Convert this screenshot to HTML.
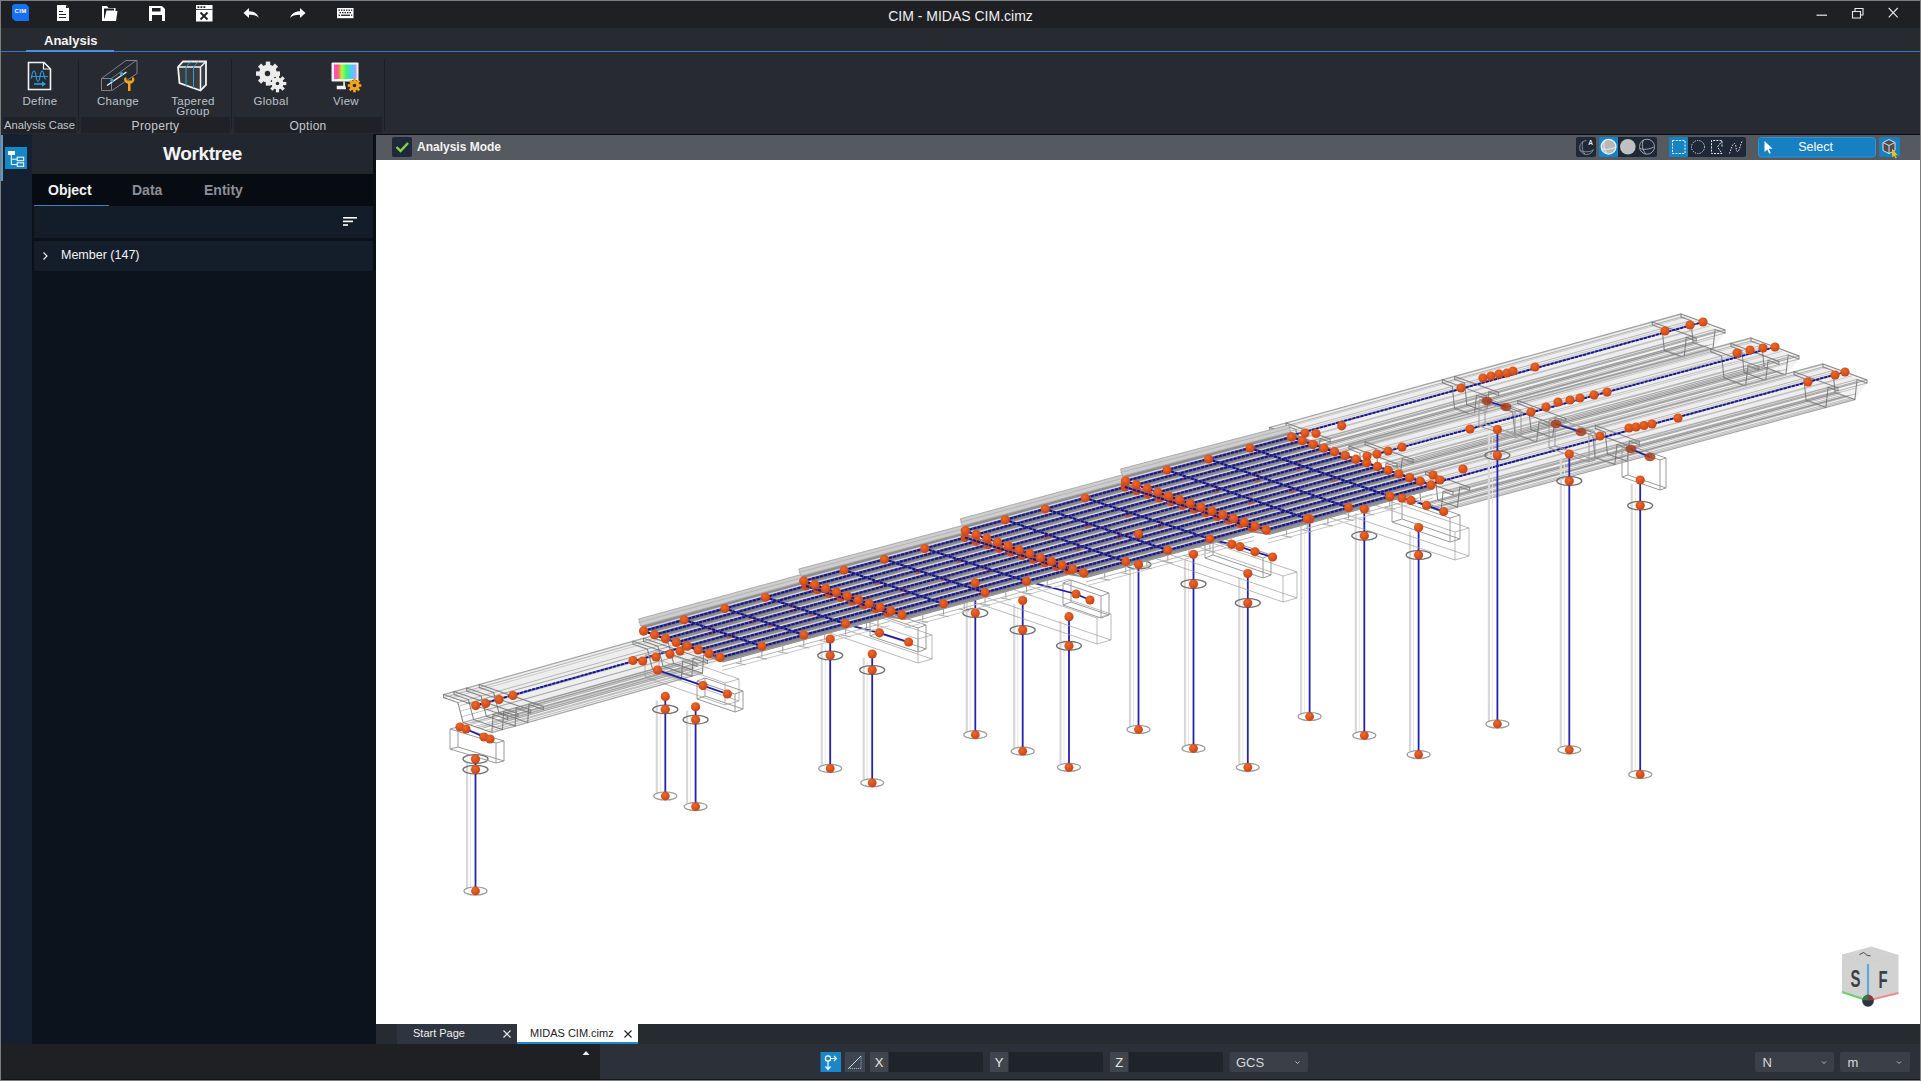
<!DOCTYPE html>
<html><head><meta charset="utf-8">
<style>
*{margin:0;padding:0;box-sizing:border-box}
html,body{width:1921px;height:1081px;overflow:hidden;background:#7d7d7d;font-family:"Liberation Sans",sans-serif}
.a{position:absolute}
.t{position:absolute;white-space:nowrap;line-height:1}
#title{left:1px;top:1px;width:1919px;height:27px;background:#1f2024}
#tabrow{left:1px;top:28px;width:1919px;height:24px;background:#272a31}
#ribbon{left:1px;top:52px;width:1919px;height:82px;background:#272a31}
#main{left:1px;top:134px;width:1919px;height:910px;background:#0a0e14}
#status{left:1px;top:1044px;width:1919px;height:36px;background:#2c3139}
.rl{color:#bcc2cb;font-size:11.5px;letter-spacing:0.3px;text-align:center}
.gl{background:#1f2126;height:16px;top:117px}
.glt{color:#c3c8cf;font-size:12px;letter-spacing:0.3px;text-align:center;width:100%;top:3px;left:0}
.sep{width:1px;background:#1c1e22;top:59px;height:71px}
</style></head><body>
<div class="a" id="title"></div>
<div class="a" id="tabrow"></div>
<div class="a" id="ribbon"></div>
<div class="a" id="main"></div>
<div class="a" id="status"></div>
<!-- title icons -->
<svg class="a" style="left:0;top:0" width="370" height="28" viewBox="0 0 370 28">
  <path d="M14 4h12l3 3v14H15l-3-3V6Z" fill="#1670f0"/>
  <text x="20.5" y="13" font-family="Liberation Sans" font-weight="bold" font-size="6" letter-spacing="0.3" fill="#fff" text-anchor="middle">CIM</text>
  <path d="M57 5h9l3 3v13H57Z" fill="#fff"/>
  <path d="M66 5v3h3Z" fill="#1f2024"/>
  <rect x="59" y="11" width="4" height="1" fill="#1f2024"/>
  <rect x="59" y="14" width="7" height="1" fill="#1f2024"/>
  <rect x="59" y="17" width="7" height="1" fill="#1f2024"/>
  <path d="M102 6h5l1.5 2h7v3h2L116 21h-14Z" fill="#fff"/>
  <path d="M104 8.5h10v2h-7.5L104.5 18.5h-0.5Z" fill="#1f2024"/>
  <path d="M149 6h13l3 3v12h-16Z" fill="#fff"/>
  <rect x="152" y="8" width="8.5" height="3.5" fill="#1f2024"/>
  <rect x="152" y="15" width="10" height="6" fill="#1f2024"/>
  <rect x="196" y="5" width="16.5" height="16.5" fill="#fff"/>
  <rect x="196" y="9" width="16.5" height="0.8" fill="#1f2024"/>
  <rect x="197.5" y="6.2" width="1.8" height="1.8" fill="#1f2024"/><rect x="200.5" y="6.2" width="1.8" height="1.8" fill="#1f2024"/><rect x="203.5" y="6.2" width="1.8" height="1.8" fill="#1f2024"/>
  <path d="M200.5 12.5l7 7M207.5 12.5l-7 7" stroke="#1f2024" stroke-width="1.8"/>
  <path d="M243.5 13l5.5-5v3.2c5 0 8.5 2.3 10 6.8c-2-2.2-5-3.2-10-3.2V18Z" fill="#fff"/>
  <path d="M305.5 13l-5.5-5v3.2c-5 0-8.5 2.3-10 6.8c2-2.2 5-3.2 10-3.2V18Z" fill="#fff"/>
  <rect x="337" y="8" width="16.5" height="10.2" fill="#fff"/>
  <g fill="#1f2024">
   <rect x="338.5" y="9.5" width="1.5" height="1.3"/><rect x="341" y="9.5" width="1.5" height="1.3"/><rect x="343.5" y="9.5" width="1.5" height="1.3"/><rect x="346" y="9.5" width="1.5" height="1.3"/><rect x="348.5" y="9.5" width="1.5" height="1.3"/><rect x="351" y="9.5" width="1.2" height="1.3"/>
   <rect x="339.5" y="12" width="1.5" height="1.3"/><rect x="342" y="12" width="1.5" height="1.3"/><rect x="344.5" y="12" width="1.5" height="1.3"/><rect x="347" y="12" width="1.5" height="1.3"/><rect x="349.5" y="12" width="1.5" height="1.3"/>
   <rect x="338.5" y="14.6" width="1.5" height="1.3"/><rect x="341" y="14.6" width="9" height="1.3"/><rect x="351" y="14.6" width="1.2" height="1.3"/>
  </g>
</svg>
<div class="t" style="left:0;width:1921px;text-align:center;top:9px;font-size:14px;color:#f0f0f0;padding-left:0">CIM - MIDAS CIM.cimz</div>
<svg class="a" style="left:1800px;top:0" width="120" height="28" viewBox="1800 0 120 28">
  <rect x="1816.5" y="14.6" width="10.5" height="1.2" fill="#e8e8e8"/>
  <path d="M1852.5 11.5h8v6.5h-8ZM1855 11.5v-3h8v6.5h-2.2" fill="none" stroke="#e8e8e8" stroke-width="1.1"/>
  <path d="M1888.7 8l9 9.3M1897.7 8l-9 9.3" stroke="#e8e8e8" stroke-width="1.1"/>
</svg>
<!-- tab row -->
<div class="t" style="left:44px;top:34px;font-size:13px;font-weight:bold;color:#f4f4f4">Analysis</div>
<div class="a" style="left:1px;top:51px;width:1919px;height:1px;background:#3e74b0"></div>
<div class="a" style="left:26px;top:50px;width:88px;height:2px;background:#4a92e0"></div>
<!-- ribbon -->
<div class="a gl" style="left:3px;width:73px"><div class="t glt" style="font-size:11.2px;letter-spacing:0">Analysis Case</div></div>
<div class="a gl" style="left:81px;width:149px"><div class="t glt">Property</div></div>
<div class="a gl" style="left:234px;width:148px"><div class="t glt">Option</div></div>
<div class="a sep" style="left:78px"></div>
<div class="a sep" style="left:231px"></div>
<div class="a sep" style="left:384px"></div>
<div class="t rl" style="left:0;width:80px;top:96px">Define</div>
<div class="t rl" style="left:78px;width:80px;top:96px">Change</div>
<div class="t rl" style="left:153px;width:80px;top:96px">Tapered</div>
<div class="t rl" style="left:153px;width:80px;top:106px">Group</div>
<div class="t rl" style="left:231px;width:80px;top:96px">Global</div>
<div class="t rl" style="left:306px;width:80px;top:96px">View</div>
<svg class="a" style="left:0;top:52px" width="390" height="45" viewBox="0 52 390 45">
  <!-- define -->
  <path d="M28.5 62.5h15.5l6.5 6.5v20.5h-22Z" fill="none" stroke="#f2f2f2" stroke-width="1.6"/>
  <path d="M43.5 62.5v6.5h6.5" fill="none" stroke="#f2f2f2" stroke-width="1.2"/>
  <path d="M31 76.5h17" stroke="#29a3e0" stroke-width="0.9"/>
  <path d="M31.5 78.5c0.5-6 1.5-7.5 2.5-7.5s1.5 2 2 5 1 5.5 2 5.5 1.5-2 2-5 1-5.5 2-5.5 1.5 1.5 2 4.5 0.8 3.5 1.8 3.5" fill="none" stroke="#29a3e0" stroke-width="1.1"/>
  <path d="M34 84h9" stroke="#29a3e0" stroke-width="1.6"/>
  <path d="M42 81.2l4 2.8-4 2.8Z" fill="#29a3e0"/>
  <!-- change -->
  <path d="M101.5 78.5h10v12h-10ZM101.5 78.5l24.5-18h11v13l-25 17M111.5 78.5l24.5-18" fill="none" stroke="#8a8d93" stroke-width="0.9"/>
  <path d="M107 85.5l19.5-13.5" stroke="#f4f4f4" stroke-width="1.4"/>
  <circle cx="112" cy="80.5" r="1.8" fill="#29a3e0"/><circle cx="121.5" cy="73.8" r="1.8" fill="#29a3e0"/>
  <path d="M124.5 77.5a4.5 4.5 0 0 0 3.5 6.2v7.3h2.5v-7.3a4.5 4.5 0 0 0 3.5-6.2l-2 0v3h-5.5v-3Z" fill="#f5a418"/>
  <!-- tapered -->
  <path d="M178 67l5-5.5h23v23.5l-5.5 5.5l-21-7.5Z" fill="#3a3c40" stroke="#f2f2f2" stroke-width="1.8"/>
  <path d="M178 67h22.5v22.5M200.5 67l5.5-5.5" fill="none" stroke="#f2f2f2" stroke-width="1.5"/>
  <path d="M186 67l5-5.5M193.5 67l5-5.5M186 67v19M193.5 67v21" fill="none" stroke="#2aa0dc" stroke-width="1"/>
  <!-- global -->
  <g fill="#ececec">
   <circle cx="268" cy="73.6" r="9"/>
   <g transform="translate(268 73.6)"><rect x="-2.2" y="-12" width="4.4" height="24"/><rect x="-2.2" y="-12" width="4.4" height="24" transform="rotate(45)"/><rect x="-2.2" y="-12" width="4.4" height="24" transform="rotate(90)"/><rect x="-2.2" y="-12" width="4.4" height="24" transform="rotate(135)"/></g>
   <circle cx="277.5" cy="83.5" r="6.5" stroke="#272a31" stroke-width="1.2"/>
   <g transform="translate(277.5 83.5)"><rect x="-1.6" y="-8.8" width="3.2" height="17.6"/><rect x="-1.6" y="-8.8" width="3.2" height="17.6" transform="rotate(45)"/><rect x="-1.6" y="-8.8" width="3.2" height="17.6" transform="rotate(90)"/><rect x="-1.6" y="-8.8" width="3.2" height="17.6" transform="rotate(135)"/></g>
  </g>
  <circle cx="267.5" cy="73.5" r="2.7" fill="#272a31"/>
  <circle cx="277.5" cy="83.5" r="1.7" fill="#272a31"/>
  <!-- view -->
  <rect x="331.5" y="62.5" width="27" height="19" rx="1" fill="#f2f2f2"/>
  <defs><linearGradient id="rb" x1="0" x2="1"><stop offset="0" stop-color="#ff4fd8"/><stop offset="0.18" stop-color="#ff5a7a"/><stop offset="0.35" stop-color="#a8ff3a"/><stop offset="0.55" stop-color="#40f070"/><stop offset="0.75" stop-color="#40d0ff"/><stop offset="1" stop-color="#b0a0ff"/></linearGradient></defs>
  <rect x="334" y="64.5" width="22.5" height="14.5" fill="url(#rb)"/>
  <path d="M344 81.5v5h-6.5v2h8.5" fill="#f2f2f2" stroke="#f2f2f2" stroke-width="1.5"/>
  <g fill="#f5a418" transform="translate(354.5 85.5)"><circle r="5.2" stroke="#272a31" stroke-width="1"/><rect x="-1.3" y="-6.8" width="2.6" height="13.6"/><rect x="-1.3" y="-6.8" width="2.6" height="13.6" transform="rotate(45)"/><rect x="-1.3" y="-6.8" width="2.6" height="13.6" transform="rotate(90)"/><rect x="-1.3" y="-6.8" width="2.6" height="13.6" transform="rotate(135)"/></g>
  <circle cx="354.5" cy="85.5" r="1.8" fill="#272a31"/>
</svg>
<!-- left strip + worktree -->
<div class="a" style="left:1px;top:134px;width:31px;height:910px;background:#152130"></div>
<div class="a" style="left:1px;top:135px;width:2px;height:46px;background:#5b9cc4"></div>
<svg class="a" style="left:5px;top:147px" width="22" height="22" viewBox="0 0 22 22">
  <rect width="22" height="22" fill="#1786c5"/>
  <rect x="3" y="4" width="7" height="4" fill="#fff"/>
  <path d="M6.3 8v9.5H12M6.3 12.2H12" fill="none" stroke="#fff" stroke-width="1"/>
  <rect x="12.2" y="10.2" width="6.5" height="3.5" fill="none" stroke="#fff" stroke-width="1"/>
  <rect x="12.2" y="15.8" width="6.5" height="3.5" fill="none" stroke="#fff" stroke-width="1"/>
</svg>
<div class="a" style="left:32px;top:134px;width:341px;height:40px;background:#22262e"></div>
<div class="t" style="left:32px;width:341px;text-align:center;top:144px;font-size:19px;letter-spacing:-0.4px;font-weight:bold;color:#f4f4f4">Worktree</div>
<div class="a" style="left:32px;top:174px;width:341px;height:32px;background:#070c13"></div>
<div class="t" style="left:48px;top:183px;font-size:14px;font-weight:bold;color:#f4f4f4">Object</div>
<div class="t" style="left:132px;top:183px;font-size:14px;font-weight:bold;color:#8b9098">Data</div>
<div class="t" style="left:204px;top:183px;font-size:14px;font-weight:bold;color:#8b9098">Entity</div>
<div class="a" style="left:34px;top:205px;width:75px;height:1.5px;background:#3d7fc0"></div>
<div class="a" style="left:32px;top:206px;width:341px;height:65px;background:#0b1119"></div><div class="a" style="left:34px;top:206px;width:339px;height:32px;background:#131d2a"></div>
<svg class="a" style="left:342px;top:214px" width="16" height="14" viewBox="0 0 16 14">
  <rect x="1" y="3" width="14" height="1.6" fill="#fff"/><rect x="1" y="6.6" width="10" height="1.6" fill="#fff"/><rect x="1" y="10.2" width="5" height="1.6" fill="#fff"/>
</svg>

<div class="a" style="left:34px;top:241px;width:339px;height:30px;background:#141e2b"></div>
<svg class="a" style="left:40px;top:250px" width="12" height="12" viewBox="0 0 12 12"><path d="M3.5 2.5l3.5 3.5-3.5 3.5" fill="none" stroke="#e8e8e8" stroke-width="1.2"/></svg>
<div class="t" style="left:61px;top:249px;font-size:12.5px;color:#f4f4f4">Member (147)</div>
<div class="a" style="left:32px;top:271px;width:344px;height:773px;background:#0d131d"></div>
<div class="a" style="left:373px;top:134px;width:3px;height:137px;background:#0a0f16"></div>
<!-- viewport -->
<div class="a" style="left:376px;top:135px;width:1544px;height:25px;background:#555a61"></div>
<div class="a" style="left:376px;top:160px;width:1544px;height:864px;background:#ffffff"></div>
<div class="a" style="left:392px;top:137px;width:20px;height:20px;background:#1f2939;border-radius:2px"></div>
<svg class="a" style="left:392px;top:137px" width="20" height="20" viewBox="0 0 20 20"><path d="M4.5 10l4 4 7.5-8" fill="none" stroke="#7ed84a" stroke-width="2.4"/></svg>
<div class="t" style="left:417px;top:141px;font-size:12px;font-weight:bold;color:#f4f4f4">Analysis Mode</div>
<svg class="a" style="left:1570px;top:134px" width="350" height="26" viewBox="1570 134 350 26">
  <rect x="1576" y="137" width="20" height="20" rx="2" fill="#1e2836"/>
  <path d="M1586.5 140.5a7 7 0 1 0 7 8.5" fill="none" stroke="#9aa0a6" stroke-width="0.8"/>
  <path d="M1579.5 150c3 2 8 2.5 13.5 0.5M1583 141.5c-1.5 4-1 9 2 13" fill="none" stroke="#9aa0a6" stroke-width="0.8"/>
  <rect x="1588" y="139" width="6" height="7" fill="#1e2836"/>
  <text x="1590.6" y="145.3" font-family="Liberation Sans" font-weight="bold" font-size="6.5" fill="#e8e8e8" text-anchor="middle">A</text>
  <rect x="1599" y="137" width="58" height="20" rx="2" fill="#1e2836"/>
  <rect x="1599" y="137" width="19" height="20" rx="1" fill="#1584c4"/>
  <circle cx="1608.6" cy="146.7" r="7.4" fill="#b8b8b8" stroke="#e8f4ff" stroke-width="1.2"/>
  <path d="M1601.5 148.5c4 1.5 9 1 14-1.5M1605 140c-2 4-1.5 9 2 13.5" fill="none" stroke="#f0f0f0" stroke-width="0.9"/>
  <circle cx="1627.8" cy="146.7" r="7.8" fill="#c0c0c2"/>
  <circle cx="1647" cy="146.7" r="7.5" fill="none" stroke="#bfc2c6" stroke-width="0.8"/>
  <path d="M1639.8 148.5c4 1.5 9 1 14-1.5M1643.5 140c-2 4-1.5 9 2 13.5" fill="none" stroke="#bfc2c6" stroke-width="0.8"/>
  <rect x="1669" y="137" width="77" height="20" rx="2" fill="#1e2836"/>
  <rect x="1669" y="137" width="19" height="20" rx="1" fill="#1584c4"/>
  <rect x="1672.5" y="140.5" width="12.5" height="13" fill="none" stroke="#fff" stroke-width="1" stroke-dasharray="2 1.3"/>
  <circle cx="1698" cy="147" r="6.5" fill="none" stroke="#e8e8e8" stroke-width="1" stroke-dasharray="1.2 1.2"/>
  <path d="M1722 146.5v-6h-10.5v13h10.5l-4.5-6.5 4.5-6" fill="none" stroke="#e8e8e8" stroke-width="1" stroke-dasharray="2 1.2"/>
  <path d="M1729.5 153.5c1.5-4 3-10 5-10s1 8 3 8 3-8 5-11" fill="none" stroke="#e8e8e8" stroke-width="1" stroke-dasharray="1.5 1.2"/>
  <rect x="1758.5" y="137.5" width="117" height="19.5" rx="3" fill="#1680c2" stroke="#2a96da" stroke-width="1"/>
  <path d="M1764.5 141v11l2.7-2.6 2 4.3 1.6-0.8-2-4.2h3.8Z" fill="#fff"/>
  <text x="1815.5" y="150.8" font-family="Liberation Sans" font-size="12.5" fill="#fff" text-anchor="middle">Select</text>
  <rect x="1879" y="137" width="21" height="20" rx="2" fill="#1680c2"/>
  <path d="M1883 142.5l6-3 6 3v8l-6 3-6-3Z" fill="#4a4d52" stroke="#e0e0e0" stroke-width="1"/>
  <path d="M1883 142.5l6 3 6-3M1889 145.5v8" fill="none" stroke="#e0e0e0" stroke-width="1"/>
  <path d="M1892 148.5l5.5 6.5-2.2 0.2 1.5 2.8-1.2 0.6-1.5-2.8-2 1.4Z" fill="#f5c400"/>
</svg>
<!-- bottom tabs -->
<div class="a" style="left:376px;top:1024px;width:1544px;height:20px;background:#262a31"></div>
<div class="a" style="left:397px;top:1024px;width:120px;height:20px;background:#2f3540"></div>
<div class="t" style="left:413px;top:1028px;font-size:11px;color:#f0f0f0">Start Page</div>
<svg class="a" style="left:501px;top:1028px" width="12" height="12" viewBox="0 0 12 12"><path d="M2.5 2.5l7 7M9.5 2.5l-7 7" stroke="#f0f0f0" stroke-width="1.1"/></svg>
<div class="a" style="left:517px;top:1024px;width:121px;height:20px;background:#ffffff"></div>
<div class="a" style="left:517px;top:1042px;width:121px;height:2px;background:#1a8ad0"></div>
<div class="t" style="left:530px;top:1028px;font-size:11px;color:#222">MIDAS CIM.cimz</div>
<svg class="a" style="left:622px;top:1028px" width="12" height="12" viewBox="0 0 12 12"><path d="M2.5 2.5l7 7M9.5 2.5l-7 7" stroke="#222" stroke-width="1.1"/></svg>
<!-- status bar -->
<div class="a" style="left:1px;top:1044px;width:599px;height:36px;background:#1f2024"></div>
<svg class="a" style="left:580px;top:1048px" width="12" height="10" viewBox="0 0 12 10"><path d="M2.5 7h7L6 3Z" fill="#f0f0f0"/></svg>
<svg class="a" style="left:800px;top:1044px" width="520" height="36" viewBox="800 1044 520 36">
  <rect x="820.5" y="1052" width="20.5" height="20" fill="#1a87c8"/>
  <circle cx="828" cy="1058.5" r="2.6" fill="none" stroke="#fff" stroke-width="1.2"/>
  <path d="M828 1061v8M825.5 1066.5l2.5 3 2.5-3M830.5 1058.5h6M834 1056l2.5 2.5-2.5 2.5" fill="none" stroke="#fff" stroke-width="1.2"/>
  <rect x="845" y="1052" width="20" height="20" fill="#3d4550"/>
  <path d="M848.5 1068.5l12.5-12.5v12.5Z" fill="none" stroke="#8fb8e0" stroke-width="0.9" stroke-dasharray="1.2 0.8"/>
  <path d="M848.5 1068.5l12.5-12.5" stroke="#c8dcf0" stroke-width="1"/>
  <rect x="870" y="1052" width="113" height="20" rx="2" fill="#1f232a"/>
  <rect x="870" y="1052" width="18.5" height="20" rx="1" fill="#41464e"/>
  <text x="879.2" y="1066.5" font-family="Liberation Sans" font-size="13" fill="#e8e8e8" text-anchor="middle">X</text>
  <rect x="990" y="1052" width="113" height="20" rx="2" fill="#1f232a"/>
  <rect x="990" y="1052" width="18.5" height="20" rx="1" fill="#41464e"/>
  <text x="999.2" y="1066.5" font-family="Liberation Sans" font-size="13" fill="#e8e8e8" text-anchor="middle">Y</text>
  <rect x="1110" y="1052" width="113" height="20" rx="2" fill="#1f232a"/>
  <rect x="1110" y="1052" width="18.5" height="20" rx="1" fill="#41464e"/>
  <text x="1119.2" y="1066.5" font-family="Liberation Sans" font-size="13" fill="#e8e8e8" text-anchor="middle">Z</text>
  <rect x="1229.5" y="1052" width="78.5" height="20" rx="2" fill="#3a3f48"/>
  <text x="1236" y="1066.5" font-family="Liberation Sans" font-size="13" fill="#d8dadd">GCS</text>
  <path d="M1295.5 1061.5l2 2 2-2" fill="none" stroke="#c8c8c8" stroke-width="0.9"/>
</svg>
<svg class="a" style="left:1740px;top:1044px" width="180" height="36" viewBox="1740 1044 180 36">
  <rect x="1755" y="1052" width="79" height="20" rx="2" fill="#3a3f48"/>
  <text x="1762.5" y="1066.5" font-family="Liberation Sans" font-size="13" fill="#d8dadd">N</text>
  <path d="M1822 1061.5l2 2 2-2" fill="none" stroke="#c8c8c8" stroke-width="0.9"/>
  <rect x="1840" y="1052" width="70" height="20" rx="2" fill="#3a3f48"/>
  <text x="1847.5" y="1066.5" font-family="Liberation Sans" font-size="13" fill="#d8dadd">m</text>
  <path d="M1897 1061.5l2 2 2-2" fill="none" stroke="#c8c8c8" stroke-width="0.9"/>
</svg>
<div class="a" style="left:1px;top:1079px;width:1919px;height:1px;background:#141518"></div>
<svg class="a" style="left:1830px;top:940px" width="80" height="75" viewBox="1830 940 80 75">
  <path d="M1842 954.5L1871.5 946.5L1898.5 955L1898.5 993L1868 1001L1842 992Z" fill="#d2d2d2"/>
  <path d="M1842 954.5L1868 963L1898.5 955" fill="none" stroke="#c4c4c4" stroke-width="0.8" stroke-dasharray="1 2"/>
  <text x="1855.5" y="987" font-family="Liberation Sans" font-size="24" font-weight="bold" fill="#3b4048" text-anchor="middle" transform="translate(1855.5 0) scale(0.62 1) translate(-1855.5 0)">S</text>
  <text x="1883" y="988" font-family="Liberation Sans" font-size="24" font-weight="bold" fill="#3b4048" text-anchor="middle" transform="translate(1883 0) scale(0.62 1) translate(-1883 0)">F</text>
  <path d="M1859.5 954.5c1.5-0.2 2.5-1.5 4-2c1.8 0.5 1.5 1.5 3 2.5c1.2 0.4 2.5 0.6 4 1" fill="none" stroke="#2a2d33" stroke-width="0.9"/>
  <line x1="1868" y1="964" x2="1868" y2="997" stroke="#5aa9d6" stroke-width="2.2"/>
  <line x1="1842" y1="992" x2="1866" y2="1000" stroke="#6ccf6c" stroke-width="2"/>
  <line x1="1870" y1="1000" x2="1898.5" y2="993" stroke="#ee8c8c" stroke-width="2"/>
  <circle cx="1868" cy="1001" r="5.8" fill="#2c3444"/>
  <path d="M1862.5 1000a5.8 5.8 0 0 1 5.5-5.5v6Z" fill="#2f7a45"/>
  <path d="M1873.5 1000a5.8 5.8 0 0 0 -5.5-5.5v6Z" fill="#8a3a3a"/>
</svg>
<svg class="a" style="left:0;top:0" width="1921" height="1081" viewBox="0 0 1921 1081">
<defs><clipPath id="vp"><rect x="376" y="160" width="1544" height="864"/></clipPath>
<radialGradient id="dg" cx="0.4" cy="0.35" r="0.7"><stop offset="0" stop-color="#ec6a2a"/><stop offset="1" stop-color="#c84012"/></radialGradient></defs>
<g clip-path="url(#vp)">
<polygon points="443.5,694.6 654.0,635.3 718.0,660.3 702.4,673.2 491.9,732.6 507.5,719.6" fill="#d8d8d8" fill-opacity="0.3"/>
<polygon points="443.5,694.6 654.0,635.3 718.0,657.3 507.5,716.6" fill="#e4e4e4" fill-opacity="0.35"/>
<line x1="443.5" y1="694.6" x2="654.0" y2="635.3" stroke="#8a8a8a" stroke-width="1.3" stroke-opacity="0.75"/>
<line x1="443.5" y1="697.6" x2="654.0" y2="638.3" stroke="#8a8a8a" stroke-width="1.0" stroke-opacity="0.6"/>
<line x1="507.5" y1="716.6" x2="718.0" y2="657.3" stroke="#8a8a8a" stroke-width="1.2" stroke-opacity="0.7"/>
<line x1="507.5" y1="719.6" x2="718.0" y2="660.3" stroke="#8a8a8a" stroke-width="1.0" stroke-opacity="0.6"/>
<line x1="457.9" y1="702.6" x2="668.4" y2="643.2" stroke="#8a8a8a" stroke-width="1.0" stroke-opacity="0.55"/>
<line x1="493.1" y1="714.6" x2="703.6" y2="655.3" stroke="#8a8a8a" stroke-width="1.0" stroke-opacity="0.55"/>
<line x1="463.1" y1="722.6" x2="673.6" y2="663.3" stroke="#8a8a8a" stroke-width="1.2" stroke-opacity="0.75"/>
<line x1="491.9" y1="732.6" x2="702.4" y2="673.2" stroke="#8a8a8a" stroke-width="1.2" stroke-opacity="0.75"/>
<line x1="469.5" y1="724.9" x2="680.0" y2="665.5" stroke="#8a8a8a" stroke-width="1.0" stroke-opacity="0.5"/>
<line x1="485.5" y1="730.4" x2="696.0" y2="671.0" stroke="#8a8a8a" stroke-width="1.0" stroke-opacity="0.5"/>
<line x1="477.5" y1="727.6" x2="688.0" y2="668.3" stroke="#8a8a8a" stroke-width="1.1" stroke-opacity="0.6"/>
<line x1="460.5" y1="711.1" x2="671.0" y2="651.8" stroke="#8a8a8a" stroke-width="1.0" stroke-opacity="0.45"/>
<line x1="492.5" y1="722.1" x2="703.0" y2="662.8" stroke="#8a8a8a" stroke-width="1.0" stroke-opacity="0.45"/>
<line x1="449.9" y1="698.3" x2="660.4" y2="639.0" stroke="#a8a8a8" stroke-width="1.0" stroke-opacity="0.5"/>
<line x1="465.9" y1="703.8" x2="676.4" y2="644.5" stroke="#a8a8a8" stroke-width="1.0" stroke-opacity="0.5"/>
<line x1="485.1" y1="710.4" x2="695.6" y2="651.1" stroke="#a8a8a8" stroke-width="1.0" stroke-opacity="0.5"/>
<line x1="501.1" y1="715.9" x2="711.6" y2="656.6" stroke="#a8a8a8" stroke-width="1.0" stroke-opacity="0.5"/>
<line x1="460.0" y1="705.6" x2="670.5" y2="646.3" stroke="#7a7a7a" stroke-width="1.0" stroke-opacity="0.45"/>
<line x1="492.0" y1="716.6" x2="702.5" y2="657.3" stroke="#7a7a7a" stroke-width="1.0" stroke-opacity="0.45"/>
<line x1="461.6" y1="716.8" x2="672.1" y2="657.5" stroke="#7a7a7a" stroke-width="1.0" stroke-opacity="0.45"/>
<line x1="492.4" y1="727.4" x2="702.9" y2="668.1" stroke="#7a7a7a" stroke-width="1.0" stroke-opacity="0.45"/>
<line x1="466.3" y1="723.8" x2="676.8" y2="664.4" stroke="#7a7a7a" stroke-width="1.0" stroke-opacity="0.45"/>
<line x1="488.7" y1="731.5" x2="699.2" y2="672.1" stroke="#7a7a7a" stroke-width="1.0" stroke-opacity="0.45"/>
<line x1="474.3" y1="726.5" x2="684.8" y2="667.2" stroke="#7a7a7a" stroke-width="1.0" stroke-opacity="0.45"/>
<line x1="480.7" y1="728.7" x2="691.2" y2="669.4" stroke="#7a7a7a" stroke-width="1.0" stroke-opacity="0.45"/>
<line x1="483.7" y1="727.6" x2="694.2" y2="668.3" stroke="#7a7a7a" stroke-width="1.0" stroke-opacity="0.45"/>
<line x1="470.9" y1="723.2" x2="681.4" y2="663.9" stroke="#7a7a7a" stroke-width="1.0" stroke-opacity="0.45"/>
<polygon points="443.5,694.6 507.5,716.6 507.5,719.6 493.1,714.6 491.9,732.6 463.1,722.6 457.9,702.6 443.5,697.6" fill="none" stroke="#6e6e6e" stroke-width="1.1" stroke-opacity="0.8"/>
<polygon points="454.0,691.6 518.0,713.6 518.0,716.6 503.6,711.7 502.4,729.6 473.6,719.7 468.4,699.6 454.0,694.6" fill="none" stroke="#6e6e6e" stroke-width="1.1" stroke-opacity="0.8"/>
<polygon points="466.7,688.1 530.7,710.1 530.7,713.1 516.3,708.1 515.1,726.0 486.3,716.1 481.1,696.0 466.7,691.1" fill="none" stroke="#6e6e6e" stroke-width="1.1" stroke-opacity="0.8"/>
<polygon points="479.3,684.5 543.3,706.5 543.3,709.5 528.9,704.6 527.7,722.5 498.9,712.6 493.7,692.5 479.3,687.5" fill="none" stroke="#6e6e6e" stroke-width="1.1" stroke-opacity="0.8"/>
<polygon points="633.0,641.2 697.0,663.2 697.0,666.2 682.6,661.3 681.4,679.2 652.6,669.3 647.4,649.2 633.0,644.2" fill="none" stroke="#6e6e6e" stroke-width="1.1" stroke-opacity="0.8"/>
<polygon points="643.5,638.3 707.5,660.3 707.5,663.3 693.1,658.3 691.9,676.2 663.1,666.3 657.9,646.2 643.5,641.3" fill="none" stroke="#6e6e6e" stroke-width="1.1" stroke-opacity="0.8"/>
<polygon points="654.0,635.3 718.0,657.3 718.0,660.3 703.6,655.3 702.4,673.2 673.6,663.3 668.4,643.2 654.0,638.3" fill="none" stroke="#6e6e6e" stroke-width="1.1" stroke-opacity="0.8"/>
<line x1="475.5" y1="705.6" x2="686.0" y2="646.3" stroke="#6060d0" stroke-width="1.8"/>
<line x1="475.5" y1="705.6" x2="686.0" y2="646.3" stroke="#17177a" stroke-width="1.8" stroke-dasharray="3 1.2"/>
<polygon points="1269.6,427.5 1681.0,314.0 1725.0,333.0 1712.9,349.6 1301.5,463.1 1313.6,446.5" fill="#d8d8d8" fill-opacity="0.3"/>
<polygon points="1269.6,427.5 1681.0,314.0 1725.0,330.0 1313.6,443.5" fill="#e4e4e4" fill-opacity="0.35"/>
<line x1="1269.6" y1="427.5" x2="1681.0" y2="314.0" stroke="#8a8a8a" stroke-width="1.3" stroke-opacity="0.75"/>
<line x1="1269.6" y1="430.5" x2="1681.0" y2="317.0" stroke="#8a8a8a" stroke-width="1.0" stroke-opacity="0.6"/>
<line x1="1313.6" y1="443.5" x2="1725.0" y2="330.0" stroke="#8a8a8a" stroke-width="1.2" stroke-opacity="0.7"/>
<line x1="1313.6" y1="446.5" x2="1725.0" y2="333.0" stroke="#8a8a8a" stroke-width="1.0" stroke-opacity="0.6"/>
<line x1="1279.5" y1="434.1" x2="1690.9" y2="320.6" stroke="#8a8a8a" stroke-width="1.0" stroke-opacity="0.55"/>
<line x1="1303.7" y1="442.9" x2="1715.1" y2="329.4" stroke="#8a8a8a" stroke-width="1.0" stroke-opacity="0.55"/>
<line x1="1281.7" y1="455.9" x2="1693.1" y2="342.4" stroke="#8a8a8a" stroke-width="1.2" stroke-opacity="0.75"/>
<line x1="1301.5" y1="463.1" x2="1712.9" y2="349.6" stroke="#8a8a8a" stroke-width="1.2" stroke-opacity="0.75"/>
<line x1="1286.1" y1="457.5" x2="1697.5" y2="344.0" stroke="#8a8a8a" stroke-width="1.0" stroke-opacity="0.5"/>
<line x1="1297.1" y1="461.5" x2="1708.5" y2="348.0" stroke="#8a8a8a" stroke-width="1.0" stroke-opacity="0.5"/>
<line x1="1291.6" y1="459.5" x2="1703.0" y2="346.0" stroke="#8a8a8a" stroke-width="1.1" stroke-opacity="0.6"/>
<line x1="1280.6" y1="443.5" x2="1692.0" y2="330.0" stroke="#8a8a8a" stroke-width="1.0" stroke-opacity="0.45"/>
<line x1="1302.6" y1="451.5" x2="1714.0" y2="338.0" stroke="#8a8a8a" stroke-width="1.0" stroke-opacity="0.45"/>
<line x1="1274.0" y1="430.6" x2="1685.4" y2="317.1" stroke="#a8a8a8" stroke-width="1.0" stroke-opacity="0.5"/>
<line x1="1285.0" y1="434.6" x2="1696.4" y2="321.1" stroke="#a8a8a8" stroke-width="1.0" stroke-opacity="0.5"/>
<line x1="1298.2" y1="439.4" x2="1709.6" y2="325.9" stroke="#a8a8a8" stroke-width="1.0" stroke-opacity="0.5"/>
<line x1="1309.2" y1="443.4" x2="1720.6" y2="329.9" stroke="#a8a8a8" stroke-width="1.0" stroke-opacity="0.5"/>
<line x1="1280.6" y1="437.5" x2="1692.0" y2="324.0" stroke="#7a7a7a" stroke-width="1.0" stroke-opacity="0.45"/>
<line x1="1302.6" y1="445.5" x2="1714.0" y2="332.0" stroke="#7a7a7a" stroke-width="1.0" stroke-opacity="0.45"/>
<line x1="1281.0" y1="449.7" x2="1692.4" y2="336.2" stroke="#7a7a7a" stroke-width="1.0" stroke-opacity="0.45"/>
<line x1="1302.2" y1="457.3" x2="1713.6" y2="343.8" stroke="#7a7a7a" stroke-width="1.0" stroke-opacity="0.45"/>
<line x1="1283.9" y1="456.7" x2="1695.3" y2="343.2" stroke="#7a7a7a" stroke-width="1.0" stroke-opacity="0.45"/>
<line x1="1299.3" y1="462.3" x2="1710.7" y2="348.8" stroke="#7a7a7a" stroke-width="1.0" stroke-opacity="0.45"/>
<line x1="1289.4" y1="458.7" x2="1700.8" y2="345.2" stroke="#7a7a7a" stroke-width="1.0" stroke-opacity="0.45"/>
<line x1="1293.8" y1="460.3" x2="1705.2" y2="346.8" stroke="#7a7a7a" stroke-width="1.0" stroke-opacity="0.45"/>
<line x1="1296.0" y1="458.7" x2="1707.4" y2="345.2" stroke="#7a7a7a" stroke-width="1.0" stroke-opacity="0.45"/>
<line x1="1287.2" y1="455.5" x2="1698.6" y2="342.0" stroke="#7a7a7a" stroke-width="1.0" stroke-opacity="0.45"/>
<polygon points="1269.6,427.5 1313.6,443.5 1313.6,446.5 1303.7,442.9 1301.5,463.1 1281.7,455.9 1279.5,434.1 1269.6,430.5" fill="none" stroke="#6e6e6e" stroke-width="1.1" stroke-opacity="0.8"/>
<polygon points="1286.1,423.0 1330.1,439.0 1330.1,442.0 1320.2,438.4 1318.0,458.6 1298.2,451.4 1296.0,429.6 1286.1,426.0" fill="none" stroke="#6e6e6e" stroke-width="1.1" stroke-opacity="0.8"/>
<polygon points="1652.2,321.9 1696.2,337.9 1696.2,340.9 1686.3,337.3 1684.1,357.5 1664.3,350.3 1662.1,328.5 1652.2,324.9" fill="none" stroke="#6e6e6e" stroke-width="1.1" stroke-opacity="0.8"/>
<polygon points="1681.0,314.0 1725.0,330.0 1725.0,333.0 1715.1,329.4 1712.9,349.6 1693.1,342.4 1690.9,320.6 1681.0,317.0" fill="none" stroke="#6e6e6e" stroke-width="1.1" stroke-opacity="0.8"/>
<polygon points="1442.4,379.8 1486.4,395.8 1486.4,398.8 1476.5,395.2 1474.3,415.4 1454.5,408.2 1452.3,386.4 1442.4,382.8" fill="none" stroke="#6e6e6e" stroke-width="1.1" stroke-opacity="0.8"/>
<polygon points="1454.7,376.4 1498.7,392.4 1498.7,395.4 1488.8,391.8 1486.6,412.0 1466.8,404.8 1464.6,383.0 1454.7,379.4" fill="none" stroke="#6e6e6e" stroke-width="1.1" stroke-opacity="0.8"/>
<line x1="1291.6" y1="435.5" x2="1703.0" y2="322.0" stroke="#6060d0" stroke-width="1.8"/>
<line x1="1291.6" y1="435.5" x2="1703.0" y2="322.0" stroke="#17177a" stroke-width="1.8" stroke-dasharray="3 1.2"/>
<polygon points="1349.0,446.0 1751.0,338.0 1799.0,359.0 1785.8,375.1 1383.8,483.1 1397.0,467.0" fill="#d8d8d8" fill-opacity="0.3"/>
<polygon points="1349.0,446.0 1751.0,338.0 1799.0,356.0 1397.0,464.0" fill="#e4e4e4" fill-opacity="0.35"/>
<line x1="1349.0" y1="446.0" x2="1751.0" y2="338.0" stroke="#8a8a8a" stroke-width="1.3" stroke-opacity="0.75"/>
<line x1="1349.0" y1="449.0" x2="1751.0" y2="341.0" stroke="#8a8a8a" stroke-width="1.0" stroke-opacity="0.6"/>
<line x1="1397.0" y1="464.0" x2="1799.0" y2="356.0" stroke="#8a8a8a" stroke-width="1.2" stroke-opacity="0.7"/>
<line x1="1397.0" y1="467.0" x2="1799.0" y2="359.0" stroke="#8a8a8a" stroke-width="1.0" stroke-opacity="0.6"/>
<line x1="1359.8" y1="453.1" x2="1761.8" y2="345.1" stroke="#8a8a8a" stroke-width="1.0" stroke-opacity="0.55"/>
<line x1="1386.2" y1="462.9" x2="1788.2" y2="354.9" stroke="#8a8a8a" stroke-width="1.0" stroke-opacity="0.55"/>
<line x1="1362.2" y1="474.9" x2="1764.2" y2="366.9" stroke="#8a8a8a" stroke-width="1.2" stroke-opacity="0.75"/>
<line x1="1383.8" y1="483.1" x2="1785.8" y2="375.1" stroke="#8a8a8a" stroke-width="1.2" stroke-opacity="0.75"/>
<line x1="1367.0" y1="476.8" x2="1769.0" y2="368.8" stroke="#8a8a8a" stroke-width="1.0" stroke-opacity="0.5"/>
<line x1="1379.0" y1="481.2" x2="1781.0" y2="373.2" stroke="#8a8a8a" stroke-width="1.0" stroke-opacity="0.5"/>
<line x1="1373.0" y1="479.0" x2="1775.0" y2="371.0" stroke="#8a8a8a" stroke-width="1.1" stroke-opacity="0.6"/>
<line x1="1361.0" y1="462.5" x2="1763.0" y2="354.5" stroke="#8a8a8a" stroke-width="1.0" stroke-opacity="0.45"/>
<line x1="1385.0" y1="471.5" x2="1787.0" y2="363.5" stroke="#8a8a8a" stroke-width="1.0" stroke-opacity="0.45"/>
<line x1="1353.8" y1="449.3" x2="1755.8" y2="341.3" stroke="#a8a8a8" stroke-width="1.0" stroke-opacity="0.5"/>
<line x1="1365.8" y1="453.8" x2="1767.8" y2="345.8" stroke="#a8a8a8" stroke-width="1.0" stroke-opacity="0.5"/>
<line x1="1380.2" y1="459.2" x2="1782.2" y2="351.2" stroke="#a8a8a8" stroke-width="1.0" stroke-opacity="0.5"/>
<line x1="1392.2" y1="463.7" x2="1794.2" y2="355.7" stroke="#a8a8a8" stroke-width="1.0" stroke-opacity="0.5"/>
<line x1="1361.0" y1="456.5" x2="1763.0" y2="348.5" stroke="#7a7a7a" stroke-width="1.0" stroke-opacity="0.45"/>
<line x1="1385.0" y1="465.5" x2="1787.0" y2="357.5" stroke="#7a7a7a" stroke-width="1.0" stroke-opacity="0.45"/>
<line x1="1361.5" y1="468.7" x2="1763.5" y2="360.7" stroke="#7a7a7a" stroke-width="1.0" stroke-opacity="0.45"/>
<line x1="1384.5" y1="477.3" x2="1786.5" y2="369.3" stroke="#7a7a7a" stroke-width="1.0" stroke-opacity="0.45"/>
<line x1="1364.6" y1="475.9" x2="1766.6" y2="367.9" stroke="#7a7a7a" stroke-width="1.0" stroke-opacity="0.45"/>
<line x1="1381.4" y1="482.1" x2="1783.4" y2="374.1" stroke="#7a7a7a" stroke-width="1.0" stroke-opacity="0.45"/>
<line x1="1370.6" y1="478.1" x2="1772.6" y2="370.1" stroke="#7a7a7a" stroke-width="1.0" stroke-opacity="0.45"/>
<line x1="1375.4" y1="479.9" x2="1777.4" y2="371.9" stroke="#7a7a7a" stroke-width="1.0" stroke-opacity="0.45"/>
<line x1="1377.8" y1="478.4" x2="1779.8" y2="370.4" stroke="#7a7a7a" stroke-width="1.0" stroke-opacity="0.45"/>
<line x1="1368.2" y1="474.8" x2="1770.2" y2="366.8" stroke="#7a7a7a" stroke-width="1.0" stroke-opacity="0.45"/>
<polygon points="1349.0,446.0 1397.0,464.0 1397.0,467.0 1386.2,462.9 1383.8,483.1 1362.2,474.9 1359.8,453.1 1349.0,449.0" fill="none" stroke="#6e6e6e" stroke-width="1.1" stroke-opacity="0.8"/>
<polygon points="1365.1,441.7 1413.1,459.7 1413.1,462.7 1402.3,458.6 1399.9,478.7 1378.3,470.6 1375.9,448.7 1365.1,444.7" fill="none" stroke="#6e6e6e" stroke-width="1.1" stroke-opacity="0.8"/>
<polygon points="1710.8,348.8 1758.8,366.8 1758.8,369.8 1748.0,365.8 1745.6,385.9 1724.0,377.8 1721.6,355.9 1710.8,351.8" fill="none" stroke="#6e6e6e" stroke-width="1.1" stroke-opacity="0.8"/>
<polygon points="1730.9,343.4 1778.9,361.4 1778.9,364.4 1768.1,360.3 1765.7,380.4 1744.1,372.3 1741.7,350.4 1730.9,346.4" fill="none" stroke="#6e6e6e" stroke-width="1.1" stroke-opacity="0.8"/>
<polygon points="1751.0,338.0 1799.0,356.0 1799.0,359.0 1788.2,354.9 1785.8,375.1 1764.2,366.9 1761.8,345.1 1751.0,341.0" fill="none" stroke="#6e6e6e" stroke-width="1.1" stroke-opacity="0.8"/>
<polygon points="1501.8,405.0 1549.8,423.0 1549.8,426.0 1539.0,421.9 1536.6,442.0 1515.0,433.9 1512.6,412.0 1501.8,408.0" fill="none" stroke="#6e6e6e" stroke-width="1.1" stroke-opacity="0.8"/>
<polygon points="1517.8,400.6 1565.8,418.6 1565.8,421.6 1555.0,417.6 1552.6,437.7 1531.0,429.6 1528.6,407.7 1517.8,403.6" fill="none" stroke="#6e6e6e" stroke-width="1.1" stroke-opacity="0.8"/>
<line x1="1373.0" y1="455.0" x2="1775.0" y2="347.0" stroke="#6060d0" stroke-width="1.8"/>
<line x1="1373.0" y1="455.0" x2="1775.0" y2="347.0" stroke="#17177a" stroke-width="1.8" stroke-dasharray="3 1.2"/>
<polygon points="1409.0,476.0 1823.0,364.0 1867.0,383.0 1854.9,399.6 1440.9,511.6 1453.0,495.0" fill="#d8d8d8" fill-opacity="0.3"/>
<polygon points="1409.0,476.0 1823.0,364.0 1867.0,380.0 1453.0,492.0" fill="#e4e4e4" fill-opacity="0.35"/>
<line x1="1409.0" y1="476.0" x2="1823.0" y2="364.0" stroke="#8a8a8a" stroke-width="1.3" stroke-opacity="0.75"/>
<line x1="1409.0" y1="479.0" x2="1823.0" y2="367.0" stroke="#8a8a8a" stroke-width="1.0" stroke-opacity="0.6"/>
<line x1="1453.0" y1="492.0" x2="1867.0" y2="380.0" stroke="#8a8a8a" stroke-width="1.2" stroke-opacity="0.7"/>
<line x1="1453.0" y1="495.0" x2="1867.0" y2="383.0" stroke="#8a8a8a" stroke-width="1.0" stroke-opacity="0.6"/>
<line x1="1418.9" y1="482.6" x2="1832.9" y2="370.6" stroke="#8a8a8a" stroke-width="1.0" stroke-opacity="0.55"/>
<line x1="1443.1" y1="491.4" x2="1857.1" y2="379.4" stroke="#8a8a8a" stroke-width="1.0" stroke-opacity="0.55"/>
<line x1="1421.1" y1="504.4" x2="1835.1" y2="392.4" stroke="#8a8a8a" stroke-width="1.2" stroke-opacity="0.75"/>
<line x1="1440.9" y1="511.6" x2="1854.9" y2="399.6" stroke="#8a8a8a" stroke-width="1.2" stroke-opacity="0.75"/>
<line x1="1425.5" y1="506.0" x2="1839.5" y2="394.0" stroke="#8a8a8a" stroke-width="1.0" stroke-opacity="0.5"/>
<line x1="1436.5" y1="510.0" x2="1850.5" y2="398.0" stroke="#8a8a8a" stroke-width="1.0" stroke-opacity="0.5"/>
<line x1="1431.0" y1="508.0" x2="1845.0" y2="396.0" stroke="#8a8a8a" stroke-width="1.1" stroke-opacity="0.6"/>
<line x1="1420.0" y1="492.0" x2="1834.0" y2="380.0" stroke="#8a8a8a" stroke-width="1.0" stroke-opacity="0.45"/>
<line x1="1442.0" y1="500.0" x2="1856.0" y2="388.0" stroke="#8a8a8a" stroke-width="1.0" stroke-opacity="0.45"/>
<line x1="1413.4" y1="479.1" x2="1827.4" y2="367.1" stroke="#a8a8a8" stroke-width="1.0" stroke-opacity="0.5"/>
<line x1="1424.4" y1="483.1" x2="1838.4" y2="371.1" stroke="#a8a8a8" stroke-width="1.0" stroke-opacity="0.5"/>
<line x1="1437.6" y1="487.9" x2="1851.6" y2="375.9" stroke="#a8a8a8" stroke-width="1.0" stroke-opacity="0.5"/>
<line x1="1448.6" y1="491.9" x2="1862.6" y2="379.9" stroke="#a8a8a8" stroke-width="1.0" stroke-opacity="0.5"/>
<line x1="1420.0" y1="486.0" x2="1834.0" y2="374.0" stroke="#7a7a7a" stroke-width="1.0" stroke-opacity="0.45"/>
<line x1="1442.0" y1="494.0" x2="1856.0" y2="382.0" stroke="#7a7a7a" stroke-width="1.0" stroke-opacity="0.45"/>
<line x1="1420.4" y1="498.2" x2="1834.4" y2="386.2" stroke="#7a7a7a" stroke-width="1.0" stroke-opacity="0.45"/>
<line x1="1441.6" y1="505.8" x2="1855.6" y2="393.8" stroke="#7a7a7a" stroke-width="1.0" stroke-opacity="0.45"/>
<line x1="1423.3" y1="505.2" x2="1837.3" y2="393.2" stroke="#7a7a7a" stroke-width="1.0" stroke-opacity="0.45"/>
<line x1="1438.7" y1="510.8" x2="1852.7" y2="398.8" stroke="#7a7a7a" stroke-width="1.0" stroke-opacity="0.45"/>
<line x1="1428.8" y1="507.2" x2="1842.8" y2="395.2" stroke="#7a7a7a" stroke-width="1.0" stroke-opacity="0.45"/>
<line x1="1433.2" y1="508.8" x2="1847.2" y2="396.8" stroke="#7a7a7a" stroke-width="1.0" stroke-opacity="0.45"/>
<line x1="1435.4" y1="507.2" x2="1849.4" y2="395.2" stroke="#7a7a7a" stroke-width="1.0" stroke-opacity="0.45"/>
<line x1="1426.6" y1="504.0" x2="1840.6" y2="392.0" stroke="#7a7a7a" stroke-width="1.0" stroke-opacity="0.45"/>
<polygon points="1409.0,476.0 1453.0,492.0 1453.0,495.0 1443.1,491.4 1440.9,511.6 1421.1,504.4 1418.9,482.6 1409.0,479.0" fill="none" stroke="#6e6e6e" stroke-width="1.1" stroke-opacity="0.8"/>
<polygon points="1425.6,471.5 1469.6,487.5 1469.6,490.5 1459.7,486.9 1457.5,507.1 1437.7,499.9 1435.5,478.1 1425.6,474.5" fill="none" stroke="#6e6e6e" stroke-width="1.1" stroke-opacity="0.8"/>
<polygon points="1794.0,371.8 1838.0,387.8 1838.0,390.8 1828.1,387.2 1825.9,407.4 1806.1,400.2 1803.9,378.4 1794.0,374.8" fill="none" stroke="#6e6e6e" stroke-width="1.1" stroke-opacity="0.8"/>
<polygon points="1823.0,364.0 1867.0,380.0 1867.0,383.0 1857.1,379.4 1854.9,399.6 1835.1,392.4 1832.9,370.6 1823.0,367.0" fill="none" stroke="#6e6e6e" stroke-width="1.1" stroke-opacity="0.8"/>
<polygon points="1582.9,429.0 1626.9,445.0 1626.9,448.0 1617.0,444.4 1614.8,464.6 1595.0,457.4 1592.8,435.6 1582.9,432.0" fill="none" stroke="#6e6e6e" stroke-width="1.1" stroke-opacity="0.8"/>
<polygon points="1595.3,425.6 1639.3,441.6 1639.3,444.6 1629.4,441.0 1627.2,461.2 1607.4,454.0 1605.2,432.2 1595.3,428.6" fill="none" stroke="#6e6e6e" stroke-width="1.1" stroke-opacity="0.8"/>
<line x1="1431.0" y1="484.0" x2="1845.0" y2="372.0" stroke="#6060d0" stroke-width="1.8"/>
<line x1="1431.0" y1="484.0" x2="1845.0" y2="372.0" stroke="#17177a" stroke-width="1.8" stroke-dasharray="3 1.2"/>
<line x1="467.0" y1="763.0" x2="467.0" y2="888.0" stroke="#d8d8d8" stroke-width="2.2"/>
<line x1="470.5" y1="767.0" x2="470.5" y2="888.0" stroke="#e4e4e4" stroke-width="0.9"/>
<ellipse cx="475.5" cy="759.0" rx="12.5" ry="4.3" fill="none" stroke="#707070" stroke-width="1.3"/>
<ellipse cx="475.5" cy="769.6" rx="12.5" ry="4.3" fill="none" stroke="#707070" stroke-width="1.3"/>
<ellipse cx="475.5" cy="891.0" rx="11.5" ry="4" fill="none" stroke="#9a9a9a" stroke-width="1.2"/>
<line x1="475.5" y1="759.0" x2="475.5" y2="891.0" stroke="#2323b0" stroke-width="1.8"/>
<line x1="656.8" y1="700.4" x2="656.8" y2="793.0" stroke="#d8d8d8" stroke-width="2.2"/>
<line x1="660.3" y1="704.4" x2="660.3" y2="793.0" stroke="#e4e4e4" stroke-width="0.9"/>
<ellipse cx="665.3" cy="709.4" rx="12.5" ry="4.3" fill="none" stroke="#707070" stroke-width="1.3"/>
<ellipse cx="665.3" cy="796.0" rx="11.5" ry="4" fill="none" stroke="#9a9a9a" stroke-width="1.2"/>
<line x1="665.3" y1="696.4" x2="665.3" y2="796.0" stroke="#2323b0" stroke-width="1.8"/>
<line x1="687.1" y1="710.8" x2="687.1" y2="803.6" stroke="#d8d8d8" stroke-width="2.2"/>
<line x1="690.6" y1="714.8" x2="690.6" y2="803.6" stroke="#e4e4e4" stroke-width="0.9"/>
<ellipse cx="695.6" cy="719.7" rx="12.5" ry="4.3" fill="none" stroke="#707070" stroke-width="1.3"/>
<ellipse cx="695.6" cy="806.6" rx="11.5" ry="4" fill="none" stroke="#9a9a9a" stroke-width="1.2"/>
<line x1="695.6" y1="706.8" x2="695.6" y2="806.6" stroke="#2323b0" stroke-width="1.8"/>
<line x1="821.7" y1="643.0" x2="821.7" y2="765.4" stroke="#d8d8d8" stroke-width="2.2"/>
<line x1="825.2" y1="647.0" x2="825.2" y2="765.4" stroke="#e4e4e4" stroke-width="0.9"/>
<ellipse cx="830.2" cy="655.5" rx="12.5" ry="4.3" fill="none" stroke="#707070" stroke-width="1.3"/>
<ellipse cx="830.2" cy="768.4" rx="11.5" ry="4" fill="none" stroke="#9a9a9a" stroke-width="1.2"/>
<line x1="830.2" y1="639.0" x2="830.2" y2="768.4" stroke="#2323b0" stroke-width="1.8"/>
<line x1="863.7" y1="658.0" x2="863.7" y2="779.8" stroke="#d8d8d8" stroke-width="2.2"/>
<line x1="867.2" y1="662.0" x2="867.2" y2="779.8" stroke="#e4e4e4" stroke-width="0.9"/>
<ellipse cx="872.2" cy="670.0" rx="12.5" ry="4.3" fill="none" stroke="#707070" stroke-width="1.3"/>
<ellipse cx="872.2" cy="782.8" rx="11.5" ry="4" fill="none" stroke="#9a9a9a" stroke-width="1.2"/>
<line x1="872.2" y1="654.0" x2="872.2" y2="782.8" stroke="#2323b0" stroke-width="1.8"/>
<line x1="966.8" y1="587.0" x2="966.8" y2="731.7" stroke="#d8d8d8" stroke-width="2.2"/>
<line x1="970.3" y1="591.0" x2="970.3" y2="731.7" stroke="#e4e4e4" stroke-width="0.9"/>
<ellipse cx="975.3" cy="613.0" rx="12.5" ry="4.3" fill="none" stroke="#707070" stroke-width="1.3"/>
<ellipse cx="975.3" cy="734.7" rx="11.5" ry="4" fill="none" stroke="#9a9a9a" stroke-width="1.2"/>
<line x1="975.3" y1="583.0" x2="975.3" y2="734.7" stroke="#2323b0" stroke-width="1.8"/>
<line x1="1014.2" y1="604.5" x2="1014.2" y2="748.2" stroke="#d8d8d8" stroke-width="2.2"/>
<line x1="1017.7" y1="608.5" x2="1017.7" y2="748.2" stroke="#e4e4e4" stroke-width="0.9"/>
<ellipse cx="1022.7" cy="630.0" rx="12.5" ry="4.3" fill="none" stroke="#707070" stroke-width="1.3"/>
<ellipse cx="1022.7" cy="751.2" rx="11.5" ry="4" fill="none" stroke="#9a9a9a" stroke-width="1.2"/>
<line x1="1022.7" y1="600.5" x2="1022.7" y2="751.2" stroke="#2323b0" stroke-width="1.8"/>
<line x1="1060.5" y1="620.7" x2="1060.5" y2="764.3" stroke="#d8d8d8" stroke-width="2.2"/>
<line x1="1064.0" y1="624.7" x2="1064.0" y2="764.3" stroke="#e4e4e4" stroke-width="0.9"/>
<ellipse cx="1069.0" cy="645.8" rx="12.5" ry="4.3" fill="none" stroke="#707070" stroke-width="1.3"/>
<ellipse cx="1069.0" cy="767.3" rx="11.5" ry="4" fill="none" stroke="#9a9a9a" stroke-width="1.2"/>
<line x1="1069.0" y1="616.7" x2="1069.0" y2="767.3" stroke="#2323b0" stroke-width="1.8"/>
<line x1="1130.0" y1="538.0" x2="1130.0" y2="726.5" stroke="#d8d8d8" stroke-width="2.2"/>
<line x1="1133.5" y1="542.0" x2="1133.5" y2="726.5" stroke="#e4e4e4" stroke-width="0.9"/>
<ellipse cx="1138.5" cy="564.6" rx="12.5" ry="4.3" fill="none" stroke="#707070" stroke-width="1.3"/>
<ellipse cx="1138.5" cy="729.5" rx="11.5" ry="4" fill="none" stroke="#9a9a9a" stroke-width="1.2"/>
<line x1="1138.5" y1="534.0" x2="1138.5" y2="729.5" stroke="#2323b0" stroke-width="1.8"/>
<line x1="1185.0" y1="558.3" x2="1185.0" y2="745.4" stroke="#d8d8d8" stroke-width="2.2"/>
<line x1="1188.5" y1="562.3" x2="1188.5" y2="745.4" stroke="#e4e4e4" stroke-width="0.9"/>
<ellipse cx="1193.5" cy="584.0" rx="12.5" ry="4.3" fill="none" stroke="#707070" stroke-width="1.3"/>
<ellipse cx="1193.5" cy="748.4" rx="11.5" ry="4" fill="none" stroke="#9a9a9a" stroke-width="1.2"/>
<line x1="1193.5" y1="554.3" x2="1193.5" y2="748.4" stroke="#2323b0" stroke-width="1.8"/>
<line x1="1239.3" y1="577.5" x2="1239.3" y2="764.3" stroke="#d8d8d8" stroke-width="2.2"/>
<line x1="1242.8" y1="581.5" x2="1242.8" y2="764.3" stroke="#e4e4e4" stroke-width="0.9"/>
<ellipse cx="1247.8" cy="603.0" rx="12.5" ry="4.3" fill="none" stroke="#707070" stroke-width="1.3"/>
<ellipse cx="1247.8" cy="767.3" rx="11.5" ry="4" fill="none" stroke="#9a9a9a" stroke-width="1.2"/>
<line x1="1247.8" y1="573.5" x2="1247.8" y2="767.3" stroke="#2323b0" stroke-width="1.8"/>
<line x1="1301.1" y1="523.0" x2="1301.1" y2="713.5" stroke="#d8d8d8" stroke-width="2.2"/>
<line x1="1304.6" y1="527.0" x2="1304.6" y2="713.5" stroke="#e4e4e4" stroke-width="0.9"/>
<ellipse cx="1309.6" cy="716.5" rx="11.5" ry="4" fill="none" stroke="#9a9a9a" stroke-width="1.2"/>
<line x1="1309.6" y1="519.0" x2="1309.6" y2="716.5" stroke="#2323b0" stroke-width="1.8"/>
<line x1="1355.8" y1="513.0" x2="1355.8" y2="732.4" stroke="#d8d8d8" stroke-width="2.2"/>
<line x1="1359.3" y1="517.0" x2="1359.3" y2="732.4" stroke="#e4e4e4" stroke-width="0.9"/>
<ellipse cx="1364.3" cy="535.8" rx="12.5" ry="4.3" fill="none" stroke="#707070" stroke-width="1.3"/>
<ellipse cx="1364.3" cy="735.4" rx="11.5" ry="4" fill="none" stroke="#9a9a9a" stroke-width="1.2"/>
<line x1="1364.3" y1="509.0" x2="1364.3" y2="735.4" stroke="#2323b0" stroke-width="1.8"/>
<line x1="1410.1" y1="531.5" x2="1410.1" y2="751.6" stroke="#d8d8d8" stroke-width="2.2"/>
<line x1="1413.6" y1="535.5" x2="1413.6" y2="751.6" stroke="#e4e4e4" stroke-width="0.9"/>
<ellipse cx="1418.6" cy="555.0" rx="12.5" ry="4.3" fill="none" stroke="#707070" stroke-width="1.3"/>
<ellipse cx="1418.6" cy="754.6" rx="11.5" ry="4" fill="none" stroke="#9a9a9a" stroke-width="1.2"/>
<line x1="1418.6" y1="527.5" x2="1418.6" y2="754.6" stroke="#2323b0" stroke-width="1.8"/>
<line x1="1488.9" y1="433.6" x2="1488.9" y2="721.0" stroke="#d8d8d8" stroke-width="2.2"/>
<line x1="1492.4" y1="437.6" x2="1492.4" y2="721.0" stroke="#e4e4e4" stroke-width="0.9"/>
<ellipse cx="1497.4" cy="455.3" rx="12.5" ry="4.3" fill="none" stroke="#707070" stroke-width="1.3"/>
<ellipse cx="1497.4" cy="724.0" rx="11.5" ry="4" fill="none" stroke="#9a9a9a" stroke-width="1.2"/>
<line x1="1497.4" y1="429.6" x2="1497.4" y2="724.0" stroke="#2323b0" stroke-width="1.8"/>
<line x1="1560.8" y1="458.0" x2="1560.8" y2="746.8" stroke="#d8d8d8" stroke-width="2.2"/>
<line x1="1564.3" y1="462.0" x2="1564.3" y2="746.8" stroke="#e4e4e4" stroke-width="0.9"/>
<ellipse cx="1569.3" cy="481.0" rx="12.5" ry="4.3" fill="none" stroke="#707070" stroke-width="1.3"/>
<ellipse cx="1569.3" cy="749.8" rx="11.5" ry="4" fill="none" stroke="#9a9a9a" stroke-width="1.2"/>
<line x1="1569.3" y1="454.0" x2="1569.3" y2="749.8" stroke="#2323b0" stroke-width="1.8"/>
<line x1="1631.7" y1="484.0" x2="1631.7" y2="771.4" stroke="#d8d8d8" stroke-width="2.2"/>
<line x1="1635.2" y1="488.0" x2="1635.2" y2="771.4" stroke="#e4e4e4" stroke-width="0.9"/>
<ellipse cx="1640.2" cy="505.6" rx="12.5" ry="4.3" fill="none" stroke="#707070" stroke-width="1.3"/>
<ellipse cx="1640.2" cy="774.4" rx="11.5" ry="4" fill="none" stroke="#9a9a9a" stroke-width="1.2"/>
<line x1="1640.2" y1="480.0" x2="1640.2" y2="774.4" stroke="#2323b0" stroke-width="1.8"/>
<line x1="450.0" y1="729.0" x2="496.0" y2="743.0" stroke="#9a9a9a" stroke-width="1.0"/>
<line x1="450.0" y1="749.0" x2="496.0" y2="763.0" stroke="#9a9a9a" stroke-width="1.0"/>
<line x1="496.0" y1="743.0" x2="504.0" y2="741.0" stroke="#9a9a9a" stroke-width="1.0"/>
<line x1="496.0" y1="763.0" x2="504.0" y2="761.0" stroke="#9a9a9a" stroke-width="1.0"/>
<line x1="504.0" y1="741.0" x2="458.0" y2="727.0" stroke="#9a9a9a" stroke-width="1.0"/>
<line x1="504.0" y1="761.0" x2="458.0" y2="747.0" stroke="#9a9a9a" stroke-width="1.0"/>
<line x1="458.0" y1="727.0" x2="450.0" y2="729.0" stroke="#9a9a9a" stroke-width="1.0"/>
<line x1="458.0" y1="747.0" x2="450.0" y2="749.0" stroke="#9a9a9a" stroke-width="1.0"/>
<line x1="450.0" y1="729.0" x2="450.0" y2="749.0" stroke="#9a9a9a" stroke-width="1.0"/>
<line x1="496.0" y1="743.0" x2="496.0" y2="763.0" stroke="#9a9a9a" stroke-width="1.0"/>
<line x1="504.0" y1="741.0" x2="504.0" y2="761.0" stroke="#9a9a9a" stroke-width="1.0"/>
<line x1="458.0" y1="727.0" x2="458.0" y2="747.0" stroke="#9a9a9a" stroke-width="1.0"/>
<polyline points="460.0,727.0 466.0,729.0 484.0,737.0 490.0,739.0" fill="none" stroke="#1c1ca0" stroke-width="1.8"/>
<line x1="697.0" y1="681.0" x2="735.0" y2="694.0" stroke="#9a9a9a" stroke-width="1.0"/>
<line x1="697.0" y1="699.0" x2="735.0" y2="712.0" stroke="#9a9a9a" stroke-width="1.0"/>
<line x1="735.0" y1="694.0" x2="743.0" y2="691.0" stroke="#9a9a9a" stroke-width="1.0"/>
<line x1="735.0" y1="712.0" x2="743.0" y2="709.0" stroke="#9a9a9a" stroke-width="1.0"/>
<line x1="743.0" y1="691.0" x2="705.0" y2="678.0" stroke="#9a9a9a" stroke-width="1.0"/>
<line x1="743.0" y1="709.0" x2="705.0" y2="696.0" stroke="#9a9a9a" stroke-width="1.0"/>
<line x1="705.0" y1="678.0" x2="697.0" y2="681.0" stroke="#9a9a9a" stroke-width="1.0"/>
<line x1="705.0" y1="696.0" x2="697.0" y2="699.0" stroke="#9a9a9a" stroke-width="1.0"/>
<line x1="697.0" y1="681.0" x2="697.0" y2="699.0" stroke="#9a9a9a" stroke-width="1.0"/>
<line x1="735.0" y1="694.0" x2="735.0" y2="712.0" stroke="#9a9a9a" stroke-width="1.0"/>
<line x1="743.0" y1="691.0" x2="743.0" y2="709.0" stroke="#9a9a9a" stroke-width="1.0"/>
<line x1="705.0" y1="678.0" x2="705.0" y2="696.0" stroke="#9a9a9a" stroke-width="1.0"/>
<polyline points="657.5,670.0 703.0,685.6 727.4,694.0" fill="none" stroke="#1c1ca0" stroke-width="1.8"/>
<line x1="870.0" y1="612.0" x2="918.0" y2="628.0" stroke="#9a9a9a" stroke-width="1.0"/>
<line x1="870.0" y1="636.0" x2="918.0" y2="652.0" stroke="#9a9a9a" stroke-width="1.0"/>
<line x1="918.0" y1="628.0" x2="926.0" y2="625.0" stroke="#9a9a9a" stroke-width="1.0"/>
<line x1="918.0" y1="652.0" x2="926.0" y2="649.0" stroke="#9a9a9a" stroke-width="1.0"/>
<line x1="926.0" y1="625.0" x2="878.0" y2="609.0" stroke="#9a9a9a" stroke-width="1.0"/>
<line x1="926.0" y1="649.0" x2="878.0" y2="633.0" stroke="#9a9a9a" stroke-width="1.0"/>
<line x1="878.0" y1="609.0" x2="870.0" y2="612.0" stroke="#9a9a9a" stroke-width="1.0"/>
<line x1="878.0" y1="633.0" x2="870.0" y2="636.0" stroke="#9a9a9a" stroke-width="1.0"/>
<line x1="870.0" y1="612.0" x2="870.0" y2="636.0" stroke="#9a9a9a" stroke-width="1.0"/>
<line x1="918.0" y1="628.0" x2="918.0" y2="652.0" stroke="#9a9a9a" stroke-width="1.0"/>
<line x1="926.0" y1="625.0" x2="926.0" y2="649.0" stroke="#9a9a9a" stroke-width="1.0"/>
<line x1="878.0" y1="609.0" x2="878.0" y2="633.0" stroke="#9a9a9a" stroke-width="1.0"/>
<polyline points="843.0,623.6 879.4,632.8 908.6,642.0" fill="none" stroke="#1c1ca0" stroke-width="1.8"/>
<line x1="1063.0" y1="583.0" x2="1101.0" y2="596.0" stroke="#9a9a9a" stroke-width="1.0"/>
<line x1="1063.0" y1="605.0" x2="1101.0" y2="618.0" stroke="#9a9a9a" stroke-width="1.0"/>
<line x1="1101.0" y1="596.0" x2="1109.0" y2="593.0" stroke="#9a9a9a" stroke-width="1.0"/>
<line x1="1101.0" y1="618.0" x2="1109.0" y2="615.0" stroke="#9a9a9a" stroke-width="1.0"/>
<line x1="1109.0" y1="593.0" x2="1071.0" y2="580.0" stroke="#9a9a9a" stroke-width="1.0"/>
<line x1="1109.0" y1="615.0" x2="1071.0" y2="602.0" stroke="#9a9a9a" stroke-width="1.0"/>
<line x1="1071.0" y1="580.0" x2="1063.0" y2="583.0" stroke="#9a9a9a" stroke-width="1.0"/>
<line x1="1071.0" y1="602.0" x2="1063.0" y2="605.0" stroke="#9a9a9a" stroke-width="1.0"/>
<line x1="1063.0" y1="583.0" x2="1063.0" y2="605.0" stroke="#9a9a9a" stroke-width="1.0"/>
<line x1="1101.0" y1="596.0" x2="1101.0" y2="618.0" stroke="#9a9a9a" stroke-width="1.0"/>
<line x1="1109.0" y1="593.0" x2="1109.0" y2="615.0" stroke="#9a9a9a" stroke-width="1.0"/>
<line x1="1071.0" y1="580.0" x2="1071.0" y2="602.0" stroke="#9a9a9a" stroke-width="1.0"/>
<polyline points="1027.8,581.4 1076.0,594.0 1090.0,600.0" fill="none" stroke="#1c1ca0" stroke-width="1.8"/>
<line x1="1205.0" y1="538.0" x2="1263.0" y2="558.0" stroke="#9a9a9a" stroke-width="1.0"/>
<line x1="1205.0" y1="558.0" x2="1263.0" y2="578.0" stroke="#9a9a9a" stroke-width="1.0"/>
<line x1="1263.0" y1="558.0" x2="1271.0" y2="555.0" stroke="#9a9a9a" stroke-width="1.0"/>
<line x1="1263.0" y1="578.0" x2="1271.0" y2="575.0" stroke="#9a9a9a" stroke-width="1.0"/>
<line x1="1271.0" y1="555.0" x2="1213.0" y2="535.0" stroke="#9a9a9a" stroke-width="1.0"/>
<line x1="1271.0" y1="575.0" x2="1213.0" y2="555.0" stroke="#9a9a9a" stroke-width="1.0"/>
<line x1="1213.0" y1="535.0" x2="1205.0" y2="538.0" stroke="#9a9a9a" stroke-width="1.0"/>
<line x1="1213.0" y1="555.0" x2="1205.0" y2="558.0" stroke="#9a9a9a" stroke-width="1.0"/>
<line x1="1205.0" y1="538.0" x2="1205.0" y2="558.0" stroke="#9a9a9a" stroke-width="1.0"/>
<line x1="1263.0" y1="558.0" x2="1263.0" y2="578.0" stroke="#9a9a9a" stroke-width="1.0"/>
<line x1="1271.0" y1="555.0" x2="1271.0" y2="575.0" stroke="#9a9a9a" stroke-width="1.0"/>
<line x1="1213.0" y1="535.0" x2="1213.0" y2="555.0" stroke="#9a9a9a" stroke-width="1.0"/>
<polyline points="1208.0,539.0 1231.8,544.3 1240.0,546.7 1255.0,551.8 1272.6,557.0" fill="none" stroke="#1c1ca0" stroke-width="1.8"/>
<line x1="1392.0" y1="498.0" x2="1450.0" y2="518.0" stroke="#9a9a9a" stroke-width="1.0"/>
<line x1="1392.0" y1="522.0" x2="1450.0" y2="542.0" stroke="#9a9a9a" stroke-width="1.0"/>
<line x1="1450.0" y1="518.0" x2="1460.0" y2="515.0" stroke="#9a9a9a" stroke-width="1.0"/>
<line x1="1450.0" y1="542.0" x2="1460.0" y2="539.0" stroke="#9a9a9a" stroke-width="1.0"/>
<line x1="1460.0" y1="515.0" x2="1402.0" y2="495.0" stroke="#9a9a9a" stroke-width="1.0"/>
<line x1="1460.0" y1="539.0" x2="1402.0" y2="519.0" stroke="#9a9a9a" stroke-width="1.0"/>
<line x1="1402.0" y1="495.0" x2="1392.0" y2="498.0" stroke="#9a9a9a" stroke-width="1.0"/>
<line x1="1402.0" y1="519.0" x2="1392.0" y2="522.0" stroke="#9a9a9a" stroke-width="1.0"/>
<line x1="1392.0" y1="498.0" x2="1392.0" y2="522.0" stroke="#9a9a9a" stroke-width="1.0"/>
<line x1="1450.0" y1="518.0" x2="1450.0" y2="542.0" stroke="#9a9a9a" stroke-width="1.0"/>
<line x1="1460.0" y1="515.0" x2="1460.0" y2="539.0" stroke="#9a9a9a" stroke-width="1.0"/>
<line x1="1402.0" y1="495.0" x2="1402.0" y2="519.0" stroke="#9a9a9a" stroke-width="1.0"/>
<polyline points="1390.0,496.6 1402.0,498.0 1411.0,500.4 1426.5,505.4 1443.7,511.5" fill="none" stroke="#1c1ca0" stroke-width="1.8"/>
<line x1="1479.0" y1="400.0" x2="1515.0" y2="412.0" stroke="#9a9a9a" stroke-width="1.0"/>
<line x1="1479.0" y1="426.0" x2="1515.0" y2="438.0" stroke="#9a9a9a" stroke-width="1.0"/>
<line x1="1515.0" y1="412.0" x2="1521.0" y2="410.0" stroke="#9a9a9a" stroke-width="1.0"/>
<line x1="1515.0" y1="438.0" x2="1521.0" y2="436.0" stroke="#9a9a9a" stroke-width="1.0"/>
<line x1="1521.0" y1="410.0" x2="1485.0" y2="398.0" stroke="#9a9a9a" stroke-width="1.0"/>
<line x1="1521.0" y1="436.0" x2="1485.0" y2="424.0" stroke="#9a9a9a" stroke-width="1.0"/>
<line x1="1485.0" y1="398.0" x2="1479.0" y2="400.0" stroke="#9a9a9a" stroke-width="1.0"/>
<line x1="1485.0" y1="424.0" x2="1479.0" y2="426.0" stroke="#9a9a9a" stroke-width="1.0"/>
<line x1="1479.0" y1="400.0" x2="1479.0" y2="426.0" stroke="#9a9a9a" stroke-width="1.0"/>
<line x1="1515.0" y1="412.0" x2="1515.0" y2="438.0" stroke="#9a9a9a" stroke-width="1.0"/>
<line x1="1521.0" y1="410.0" x2="1521.0" y2="436.0" stroke="#9a9a9a" stroke-width="1.0"/>
<line x1="1485.0" y1="398.0" x2="1485.0" y2="424.0" stroke="#9a9a9a" stroke-width="1.0"/>
<line x1="1549.0" y1="420.0" x2="1589.0" y2="434.0" stroke="#9a9a9a" stroke-width="1.0"/>
<line x1="1549.0" y1="448.0" x2="1589.0" y2="462.0" stroke="#9a9a9a" stroke-width="1.0"/>
<line x1="1589.0" y1="434.0" x2="1595.0" y2="432.0" stroke="#9a9a9a" stroke-width="1.0"/>
<line x1="1589.0" y1="462.0" x2="1595.0" y2="460.0" stroke="#9a9a9a" stroke-width="1.0"/>
<line x1="1595.0" y1="432.0" x2="1555.0" y2="418.0" stroke="#9a9a9a" stroke-width="1.0"/>
<line x1="1595.0" y1="460.0" x2="1555.0" y2="446.0" stroke="#9a9a9a" stroke-width="1.0"/>
<line x1="1555.0" y1="418.0" x2="1549.0" y2="420.0" stroke="#9a9a9a" stroke-width="1.0"/>
<line x1="1555.0" y1="446.0" x2="1549.0" y2="448.0" stroke="#9a9a9a" stroke-width="1.0"/>
<line x1="1549.0" y1="420.0" x2="1549.0" y2="448.0" stroke="#9a9a9a" stroke-width="1.0"/>
<line x1="1589.0" y1="434.0" x2="1589.0" y2="462.0" stroke="#9a9a9a" stroke-width="1.0"/>
<line x1="1595.0" y1="432.0" x2="1595.0" y2="460.0" stroke="#9a9a9a" stroke-width="1.0"/>
<line x1="1555.0" y1="418.0" x2="1555.0" y2="446.0" stroke="#9a9a9a" stroke-width="1.0"/>
<line x1="1622.0" y1="447.0" x2="1660.0" y2="460.0" stroke="#9a9a9a" stroke-width="1.0"/>
<line x1="1622.0" y1="477.0" x2="1660.0" y2="490.0" stroke="#9a9a9a" stroke-width="1.0"/>
<line x1="1660.0" y1="460.0" x2="1666.0" y2="458.0" stroke="#9a9a9a" stroke-width="1.0"/>
<line x1="1660.0" y1="490.0" x2="1666.0" y2="488.0" stroke="#9a9a9a" stroke-width="1.0"/>
<line x1="1666.0" y1="458.0" x2="1628.0" y2="445.0" stroke="#9a9a9a" stroke-width="1.0"/>
<line x1="1666.0" y1="488.0" x2="1628.0" y2="475.0" stroke="#9a9a9a" stroke-width="1.0"/>
<line x1="1628.0" y1="445.0" x2="1622.0" y2="447.0" stroke="#9a9a9a" stroke-width="1.0"/>
<line x1="1628.0" y1="475.0" x2="1622.0" y2="477.0" stroke="#9a9a9a" stroke-width="1.0"/>
<line x1="1622.0" y1="447.0" x2="1622.0" y2="477.0" stroke="#9a9a9a" stroke-width="1.0"/>
<line x1="1660.0" y1="460.0" x2="1660.0" y2="490.0" stroke="#9a9a9a" stroke-width="1.0"/>
<line x1="1666.0" y1="458.0" x2="1666.0" y2="488.0" stroke="#9a9a9a" stroke-width="1.0"/>
<line x1="1628.0" y1="445.0" x2="1628.0" y2="475.0" stroke="#9a9a9a" stroke-width="1.0"/>
<polyline points="1487.0,401.0 1506.0,407.0" fill="none" stroke="#1c1ca0" stroke-width="1.8"/>
<ellipse cx="1487.0" cy="401.0" rx="5.5" ry="4.2" fill="#a8401c" fill-opacity="0.85"/>
<ellipse cx="1506.0" cy="407.0" rx="5.5" ry="4.2" fill="#a8401c" fill-opacity="0.85"/>
<polyline points="1556.0,424.0 1581.0,432.0" fill="none" stroke="#1c1ca0" stroke-width="1.8"/>
<ellipse cx="1556.0" cy="424.0" rx="5.5" ry="4.2" fill="#a8401c" fill-opacity="0.85"/>
<ellipse cx="1581.0" cy="432.0" rx="5.5" ry="4.2" fill="#a8401c" fill-opacity="0.85"/>
<polyline points="1631.0,449.0 1650.0,457.0" fill="none" stroke="#1c1ca0" stroke-width="1.8"/>
<ellipse cx="1631.0" cy="449.0" rx="5.5" ry="4.2" fill="#a8401c" fill-opacity="0.85"/>
<ellipse cx="1650.0" cy="457.0" rx="5.5" ry="4.2" fill="#a8401c" fill-opacity="0.85"/>
<line x1="645.0" y1="655.0" x2="725.0" y2="683.0" stroke="#9c9c9c" stroke-width="1.0" stroke-opacity="0.7"/>
<line x1="645.0" y1="677.0" x2="725.0" y2="705.0" stroke="#9c9c9c" stroke-width="1.0" stroke-opacity="0.7"/>
<line x1="725.0" y1="683.0" x2="739.0" y2="679.0" stroke="#9c9c9c" stroke-width="1.0" stroke-opacity="0.7"/>
<line x1="725.0" y1="705.0" x2="739.0" y2="701.0" stroke="#9c9c9c" stroke-width="1.0" stroke-opacity="0.7"/>
<line x1="739.0" y1="679.0" x2="659.0" y2="651.0" stroke="#9c9c9c" stroke-width="1.0" stroke-opacity="0.7"/>
<line x1="739.0" y1="701.0" x2="659.0" y2="673.0" stroke="#9c9c9c" stroke-width="1.0" stroke-opacity="0.7"/>
<line x1="659.0" y1="651.0" x2="645.0" y2="655.0" stroke="#9c9c9c" stroke-width="1.0" stroke-opacity="0.7"/>
<line x1="659.0" y1="673.0" x2="645.0" y2="677.0" stroke="#9c9c9c" stroke-width="1.0" stroke-opacity="0.7"/>
<line x1="645.0" y1="655.0" x2="645.0" y2="677.0" stroke="#9c9c9c" stroke-width="1.0" stroke-opacity="0.7"/>
<line x1="725.0" y1="683.0" x2="725.0" y2="705.0" stroke="#9c9c9c" stroke-width="1.0" stroke-opacity="0.7"/>
<line x1="739.0" y1="679.0" x2="739.0" y2="701.0" stroke="#9c9c9c" stroke-width="1.0" stroke-opacity="0.7"/>
<line x1="659.0" y1="651.0" x2="659.0" y2="673.0" stroke="#9c9c9c" stroke-width="1.0" stroke-opacity="0.7"/>
<line x1="818.0" y1="605.0" x2="918.0" y2="639.0" stroke="#9c9c9c" stroke-width="1.0" stroke-opacity="0.7"/>
<line x1="818.0" y1="629.0" x2="918.0" y2="663.0" stroke="#9c9c9c" stroke-width="1.0" stroke-opacity="0.7"/>
<line x1="918.0" y1="639.0" x2="932.0" y2="635.0" stroke="#9c9c9c" stroke-width="1.0" stroke-opacity="0.7"/>
<line x1="918.0" y1="663.0" x2="932.0" y2="659.0" stroke="#9c9c9c" stroke-width="1.0" stroke-opacity="0.7"/>
<line x1="932.0" y1="635.0" x2="832.0" y2="601.0" stroke="#9c9c9c" stroke-width="1.0" stroke-opacity="0.7"/>
<line x1="932.0" y1="659.0" x2="832.0" y2="625.0" stroke="#9c9c9c" stroke-width="1.0" stroke-opacity="0.7"/>
<line x1="832.0" y1="601.0" x2="818.0" y2="605.0" stroke="#9c9c9c" stroke-width="1.0" stroke-opacity="0.7"/>
<line x1="832.0" y1="625.0" x2="818.0" y2="629.0" stroke="#9c9c9c" stroke-width="1.0" stroke-opacity="0.7"/>
<line x1="818.0" y1="605.0" x2="818.0" y2="629.0" stroke="#9c9c9c" stroke-width="1.0" stroke-opacity="0.7"/>
<line x1="918.0" y1="639.0" x2="918.0" y2="663.0" stroke="#9c9c9c" stroke-width="1.0" stroke-opacity="0.7"/>
<line x1="932.0" y1="635.0" x2="932.0" y2="659.0" stroke="#9c9c9c" stroke-width="1.0" stroke-opacity="0.7"/>
<line x1="832.0" y1="601.0" x2="832.0" y2="625.0" stroke="#9c9c9c" stroke-width="1.0" stroke-opacity="0.7"/>
<line x1="962.0" y1="572.0" x2="1097.0" y2="618.0" stroke="#9c9c9c" stroke-width="1.0" stroke-opacity="0.7"/>
<line x1="962.0" y1="598.0" x2="1097.0" y2="644.0" stroke="#9c9c9c" stroke-width="1.0" stroke-opacity="0.7"/>
<line x1="1097.0" y1="618.0" x2="1111.0" y2="614.0" stroke="#9c9c9c" stroke-width="1.0" stroke-opacity="0.7"/>
<line x1="1097.0" y1="644.0" x2="1111.0" y2="640.0" stroke="#9c9c9c" stroke-width="1.0" stroke-opacity="0.7"/>
<line x1="1111.0" y1="614.0" x2="976.0" y2="568.0" stroke="#9c9c9c" stroke-width="1.0" stroke-opacity="0.7"/>
<line x1="1111.0" y1="640.0" x2="976.0" y2="594.0" stroke="#9c9c9c" stroke-width="1.0" stroke-opacity="0.7"/>
<line x1="976.0" y1="568.0" x2="962.0" y2="572.0" stroke="#9c9c9c" stroke-width="1.0" stroke-opacity="0.7"/>
<line x1="976.0" y1="594.0" x2="962.0" y2="598.0" stroke="#9c9c9c" stroke-width="1.0" stroke-opacity="0.7"/>
<line x1="962.0" y1="572.0" x2="962.0" y2="598.0" stroke="#9c9c9c" stroke-width="1.0" stroke-opacity="0.7"/>
<line x1="1097.0" y1="618.0" x2="1097.0" y2="644.0" stroke="#9c9c9c" stroke-width="1.0" stroke-opacity="0.7"/>
<line x1="1111.0" y1="614.0" x2="1111.0" y2="640.0" stroke="#9c9c9c" stroke-width="1.0" stroke-opacity="0.7"/>
<line x1="976.0" y1="568.0" x2="976.0" y2="594.0" stroke="#9c9c9c" stroke-width="1.0" stroke-opacity="0.7"/>
<line x1="1125.0" y1="522.0" x2="1283.0" y2="576.0" stroke="#9c9c9c" stroke-width="1.0" stroke-opacity="0.7"/>
<line x1="1125.0" y1="548.0" x2="1283.0" y2="602.0" stroke="#9c9c9c" stroke-width="1.0" stroke-opacity="0.7"/>
<line x1="1283.0" y1="576.0" x2="1297.0" y2="572.0" stroke="#9c9c9c" stroke-width="1.0" stroke-opacity="0.7"/>
<line x1="1283.0" y1="602.0" x2="1297.0" y2="598.0" stroke="#9c9c9c" stroke-width="1.0" stroke-opacity="0.7"/>
<line x1="1297.0" y1="572.0" x2="1139.0" y2="518.0" stroke="#9c9c9c" stroke-width="1.0" stroke-opacity="0.7"/>
<line x1="1297.0" y1="598.0" x2="1139.0" y2="544.0" stroke="#9c9c9c" stroke-width="1.0" stroke-opacity="0.7"/>
<line x1="1139.0" y1="518.0" x2="1125.0" y2="522.0" stroke="#9c9c9c" stroke-width="1.0" stroke-opacity="0.7"/>
<line x1="1139.0" y1="544.0" x2="1125.0" y2="548.0" stroke="#9c9c9c" stroke-width="1.0" stroke-opacity="0.7"/>
<line x1="1125.0" y1="522.0" x2="1125.0" y2="548.0" stroke="#9c9c9c" stroke-width="1.0" stroke-opacity="0.7"/>
<line x1="1283.0" y1="576.0" x2="1283.0" y2="602.0" stroke="#9c9c9c" stroke-width="1.0" stroke-opacity="0.7"/>
<line x1="1297.0" y1="572.0" x2="1297.0" y2="598.0" stroke="#9c9c9c" stroke-width="1.0" stroke-opacity="0.7"/>
<line x1="1139.0" y1="518.0" x2="1139.0" y2="544.0" stroke="#9c9c9c" stroke-width="1.0" stroke-opacity="0.7"/>
<line x1="1295.0" y1="478.0" x2="1455.0" y2="532.0" stroke="#9c9c9c" stroke-width="1.0" stroke-opacity="0.7"/>
<line x1="1295.0" y1="506.0" x2="1455.0" y2="560.0" stroke="#9c9c9c" stroke-width="1.0" stroke-opacity="0.7"/>
<line x1="1455.0" y1="532.0" x2="1469.0" y2="528.0" stroke="#9c9c9c" stroke-width="1.0" stroke-opacity="0.7"/>
<line x1="1455.0" y1="560.0" x2="1469.0" y2="556.0" stroke="#9c9c9c" stroke-width="1.0" stroke-opacity="0.7"/>
<line x1="1469.0" y1="528.0" x2="1309.0" y2="474.0" stroke="#9c9c9c" stroke-width="1.0" stroke-opacity="0.7"/>
<line x1="1469.0" y1="556.0" x2="1309.0" y2="502.0" stroke="#9c9c9c" stroke-width="1.0" stroke-opacity="0.7"/>
<line x1="1309.0" y1="474.0" x2="1295.0" y2="478.0" stroke="#9c9c9c" stroke-width="1.0" stroke-opacity="0.7"/>
<line x1="1309.0" y1="502.0" x2="1295.0" y2="506.0" stroke="#9c9c9c" stroke-width="1.0" stroke-opacity="0.7"/>
<line x1="1295.0" y1="478.0" x2="1295.0" y2="506.0" stroke="#9c9c9c" stroke-width="1.0" stroke-opacity="0.7"/>
<line x1="1455.0" y1="532.0" x2="1455.0" y2="560.0" stroke="#9c9c9c" stroke-width="1.0" stroke-opacity="0.7"/>
<line x1="1469.0" y1="528.0" x2="1469.0" y2="556.0" stroke="#9c9c9c" stroke-width="1.0" stroke-opacity="0.7"/>
<line x1="1309.0" y1="474.0" x2="1309.0" y2="502.0" stroke="#9c9c9c" stroke-width="1.0" stroke-opacity="0.7"/>
<polygon points="640.6,626.0 805.0,581.0 905.0,620.0 887.5,617.5 723.0,662.5" fill="#8e8e92"/>
<polygon points="638.6,619.0 803.0,574.0 805.0,581.0 640.6,626.0" fill="#cdcdcd" stroke="#a0a0a0" stroke-width="0.8"/>
<line x1="638.6" y1="622.5" x2="803.0" y2="577.5" stroke="#b4b4b4" stroke-width="1.0"/>
<line x1="722.0" y1="661.5" x2="889.5" y2="616.5" stroke="#9a9a9a" stroke-width="1.0"/>
<line x1="722.0" y1="666.5" x2="889.5" y2="621.5" stroke="#b8b8b8" stroke-width="1.0"/>
<line x1="722.0" y1="670.5" x2="889.5" y2="625.5" stroke="#c8c8c8" stroke-width="1.0"/>
<line x1="740.9" y1="655.9" x2="740.9" y2="662.9" stroke="#a0a0a0" stroke-width="1.0"/>
<line x1="735.9" y1="662.9" x2="745.9" y2="664.9" stroke="#a8a8a8" stroke-width="1.0"/>
<line x1="761.9" y1="650.2" x2="761.9" y2="657.2" stroke="#a0a0a0" stroke-width="1.0"/>
<line x1="756.9" y1="657.2" x2="766.9" y2="659.2" stroke="#a8a8a8" stroke-width="1.0"/>
<line x1="782.8" y1="644.6" x2="782.8" y2="651.6" stroke="#a0a0a0" stroke-width="1.0"/>
<line x1="777.8" y1="651.6" x2="787.8" y2="653.6" stroke="#a8a8a8" stroke-width="1.0"/>
<line x1="803.8" y1="639.0" x2="803.8" y2="646.0" stroke="#a0a0a0" stroke-width="1.0"/>
<line x1="798.8" y1="646.0" x2="808.8" y2="648.0" stroke="#a8a8a8" stroke-width="1.0"/>
<line x1="824.7" y1="633.4" x2="824.7" y2="640.4" stroke="#a0a0a0" stroke-width="1.0"/>
<line x1="819.7" y1="640.4" x2="829.7" y2="642.4" stroke="#a8a8a8" stroke-width="1.0"/>
<line x1="845.6" y1="627.8" x2="845.6" y2="634.8" stroke="#a0a0a0" stroke-width="1.0"/>
<line x1="840.6" y1="634.8" x2="850.6" y2="636.8" stroke="#a8a8a8" stroke-width="1.0"/>
<line x1="866.6" y1="622.1" x2="866.6" y2="629.1" stroke="#a0a0a0" stroke-width="1.0"/>
<line x1="861.6" y1="629.1" x2="871.6" y2="631.1" stroke="#a8a8a8" stroke-width="1.0"/>
<polygon points="800.8,576.0 964.0,532.6 1086.7,578.0 1068.0,575.0 905.0,620.0" fill="#8e8e92"/>
<polygon points="798.8,569.0 962.0,525.6 964.0,532.6 800.8,576.0" fill="#cdcdcd" stroke="#a0a0a0" stroke-width="0.8"/>
<line x1="798.8" y1="572.5" x2="962.0" y2="529.1" stroke="#b4b4b4" stroke-width="1.0"/>
<line x1="904.0" y1="619.0" x2="1070.0" y2="574.0" stroke="#9a9a9a" stroke-width="1.0"/>
<line x1="904.0" y1="624.0" x2="1070.0" y2="579.0" stroke="#b8b8b8" stroke-width="1.0"/>
<line x1="904.0" y1="628.0" x2="1070.0" y2="583.0" stroke="#c8c8c8" stroke-width="1.0"/>
<line x1="922.8" y1="613.4" x2="922.8" y2="620.4" stroke="#a0a0a0" stroke-width="1.0"/>
<line x1="917.8" y1="620.4" x2="927.8" y2="622.4" stroke="#a8a8a8" stroke-width="1.0"/>
<line x1="943.5" y1="607.8" x2="943.5" y2="614.8" stroke="#a0a0a0" stroke-width="1.0"/>
<line x1="938.5" y1="614.8" x2="948.5" y2="616.8" stroke="#a8a8a8" stroke-width="1.0"/>
<line x1="964.2" y1="602.1" x2="964.2" y2="609.1" stroke="#a0a0a0" stroke-width="1.0"/>
<line x1="959.2" y1="609.1" x2="969.2" y2="611.1" stroke="#a8a8a8" stroke-width="1.0"/>
<line x1="985.0" y1="596.5" x2="985.0" y2="603.5" stroke="#a0a0a0" stroke-width="1.0"/>
<line x1="980.0" y1="603.5" x2="990.0" y2="605.5" stroke="#a8a8a8" stroke-width="1.0"/>
<line x1="1005.8" y1="590.9" x2="1005.8" y2="597.9" stroke="#a0a0a0" stroke-width="1.0"/>
<line x1="1000.8" y1="597.9" x2="1010.8" y2="599.9" stroke="#a8a8a8" stroke-width="1.0"/>
<line x1="1026.5" y1="585.2" x2="1026.5" y2="592.2" stroke="#a0a0a0" stroke-width="1.0"/>
<line x1="1021.5" y1="592.2" x2="1031.5" y2="594.2" stroke="#a8a8a8" stroke-width="1.0"/>
<line x1="1047.2" y1="579.6" x2="1047.2" y2="586.6" stroke="#a0a0a0" stroke-width="1.0"/>
<line x1="1042.2" y1="586.6" x2="1052.2" y2="588.6" stroke="#a8a8a8" stroke-width="1.0"/>
<polygon points="962.3,525.8 1124.0,482.0 1269.0,535.0 1252.0,532.5 1086.7,578.0" fill="#8e8e92"/>
<polygon points="960.3,518.8 1122.0,475.0 1124.0,482.0 962.3,525.8" fill="#cdcdcd" stroke="#a0a0a0" stroke-width="0.8"/>
<line x1="960.3" y1="522.3" x2="1122.0" y2="478.5" stroke="#b4b4b4" stroke-width="1.0"/>
<line x1="1085.7" y1="577.0" x2="1254.0" y2="531.5" stroke="#9a9a9a" stroke-width="1.0"/>
<line x1="1085.7" y1="582.0" x2="1254.0" y2="536.5" stroke="#b8b8b8" stroke-width="1.0"/>
<line x1="1085.7" y1="586.0" x2="1254.0" y2="540.5" stroke="#c8c8c8" stroke-width="1.0"/>
<line x1="1104.7" y1="571.3" x2="1104.7" y2="578.3" stroke="#a0a0a0" stroke-width="1.0"/>
<line x1="1099.7" y1="578.3" x2="1109.7" y2="580.3" stroke="#a8a8a8" stroke-width="1.0"/>
<line x1="1125.8" y1="565.6" x2="1125.8" y2="572.6" stroke="#a0a0a0" stroke-width="1.0"/>
<line x1="1120.8" y1="572.6" x2="1130.8" y2="574.6" stroke="#a8a8a8" stroke-width="1.0"/>
<line x1="1146.8" y1="559.9" x2="1146.8" y2="566.9" stroke="#a0a0a0" stroke-width="1.0"/>
<line x1="1141.8" y1="566.9" x2="1151.8" y2="568.9" stroke="#a8a8a8" stroke-width="1.0"/>
<line x1="1167.8" y1="554.2" x2="1167.8" y2="561.2" stroke="#a0a0a0" stroke-width="1.0"/>
<line x1="1162.8" y1="561.2" x2="1172.8" y2="563.2" stroke="#a8a8a8" stroke-width="1.0"/>
<line x1="1188.9" y1="548.6" x2="1188.9" y2="555.6" stroke="#a0a0a0" stroke-width="1.0"/>
<line x1="1183.9" y1="555.6" x2="1193.9" y2="557.6" stroke="#a8a8a8" stroke-width="1.0"/>
<line x1="1209.9" y1="542.9" x2="1209.9" y2="549.9" stroke="#a0a0a0" stroke-width="1.0"/>
<line x1="1204.9" y1="549.9" x2="1214.9" y2="551.9" stroke="#a8a8a8" stroke-width="1.0"/>
<line x1="1231.0" y1="537.2" x2="1231.0" y2="544.2" stroke="#a0a0a0" stroke-width="1.0"/>
<line x1="1226.0" y1="544.2" x2="1236.0" y2="546.2" stroke="#a8a8a8" stroke-width="1.0"/>
<polygon points="1122.5,476.0 1290.6,432.0 1434.0,490.0 1431.0,490.0 1269.0,535.0" fill="#8e8e92"/>
<polygon points="1120.5,469.0 1288.6,425.0 1290.6,432.0 1122.5,476.0" fill="#cdcdcd" stroke="#a0a0a0" stroke-width="0.8"/>
<line x1="1120.5" y1="472.5" x2="1288.6" y2="428.5" stroke="#b4b4b4" stroke-width="1.0"/>
<line x1="1268.0" y1="534.0" x2="1433.0" y2="489.0" stroke="#9a9a9a" stroke-width="1.0"/>
<line x1="1268.0" y1="539.0" x2="1433.0" y2="494.0" stroke="#b8b8b8" stroke-width="1.0"/>
<line x1="1268.0" y1="543.0" x2="1433.0" y2="498.0" stroke="#c8c8c8" stroke-width="1.0"/>
<line x1="1286.6" y1="528.4" x2="1286.6" y2="535.4" stroke="#a0a0a0" stroke-width="1.0"/>
<line x1="1281.6" y1="535.4" x2="1291.6" y2="537.4" stroke="#a8a8a8" stroke-width="1.0"/>
<line x1="1307.2" y1="522.8" x2="1307.2" y2="529.8" stroke="#a0a0a0" stroke-width="1.0"/>
<line x1="1302.2" y1="529.8" x2="1312.2" y2="531.8" stroke="#a8a8a8" stroke-width="1.0"/>
<line x1="1327.9" y1="517.1" x2="1327.9" y2="524.1" stroke="#a0a0a0" stroke-width="1.0"/>
<line x1="1322.9" y1="524.1" x2="1332.9" y2="526.1" stroke="#a8a8a8" stroke-width="1.0"/>
<line x1="1348.5" y1="511.5" x2="1348.5" y2="518.5" stroke="#a0a0a0" stroke-width="1.0"/>
<line x1="1343.5" y1="518.5" x2="1353.5" y2="520.5" stroke="#a8a8a8" stroke-width="1.0"/>
<line x1="1369.1" y1="505.9" x2="1369.1" y2="512.9" stroke="#a0a0a0" stroke-width="1.0"/>
<line x1="1364.1" y1="512.9" x2="1374.1" y2="514.9" stroke="#a8a8a8" stroke-width="1.0"/>
<line x1="1389.8" y1="500.2" x2="1389.8" y2="507.2" stroke="#a0a0a0" stroke-width="1.0"/>
<line x1="1384.8" y1="507.2" x2="1394.8" y2="509.2" stroke="#a8a8a8" stroke-width="1.0"/>
<line x1="1410.4" y1="494.6" x2="1410.4" y2="501.6" stroke="#a0a0a0" stroke-width="1.0"/>
<line x1="1405.4" y1="501.6" x2="1415.4" y2="503.6" stroke="#a8a8a8" stroke-width="1.0"/>
<circle cx="711.4" cy="631.0" r="4.2" fill="#b0502a" fill-opacity="0.75"/>
<circle cx="730.8" cy="637.6" r="4.2" fill="#b0502a" fill-opacity="0.75"/>
<circle cx="752.4" cy="619.8" r="4.2" fill="#b0502a" fill-opacity="0.75"/>
<circle cx="772.2" cy="626.4" r="4.2" fill="#b0502a" fill-opacity="0.75"/>
<circle cx="793.5" cy="608.5" r="4.2" fill="#b0502a" fill-opacity="0.75"/>
<circle cx="813.5" cy="615.1" r="4.2" fill="#b0502a" fill-opacity="0.75"/>
<circle cx="878.9" cy="583.9" r="4.2" fill="#b0502a" fill-opacity="0.75"/>
<circle cx="903.7" cy="592.3" r="4.2" fill="#b0502a" fill-opacity="0.75"/>
<circle cx="919.6" cy="572.9" r="4.2" fill="#b0502a" fill-opacity="0.75"/>
<circle cx="944.8" cy="581.2" r="4.2" fill="#b0502a" fill-opacity="0.75"/>
<circle cx="960.3" cy="561.9" r="4.2" fill="#b0502a" fill-opacity="0.75"/>
<circle cx="985.8" cy="570.1" r="4.2" fill="#b0502a" fill-opacity="0.75"/>
<circle cx="1047.4" cy="536.5" r="4.2" fill="#b0502a" fill-opacity="0.75"/>
<circle cx="1077.6" cy="546.9" r="4.2" fill="#b0502a" fill-opacity="0.75"/>
<circle cx="1088.1" cy="525.4" r="4.2" fill="#b0502a" fill-opacity="0.75"/>
<circle cx="1118.8" cy="535.7" r="4.2" fill="#b0502a" fill-opacity="0.75"/>
<circle cx="1128.8" cy="514.3" r="4.2" fill="#b0502a" fill-opacity="0.75"/>
<circle cx="1160.0" cy="524.5" r="4.2" fill="#b0502a" fill-opacity="0.75"/>
<circle cx="1216.1" cy="489.1" r="4.2" fill="#b0502a" fill-opacity="0.75"/>
<circle cx="1251.2" cy="501.2" r="4.2" fill="#b0502a" fill-opacity="0.75"/>
<circle cx="1257.5" cy="478.0" r="4.2" fill="#b0502a" fill-opacity="0.75"/>
<circle cx="1292.5" cy="490.1" r="4.2" fill="#b0502a" fill-opacity="0.75"/>
<circle cx="1299.0" cy="466.9" r="4.2" fill="#b0502a" fill-opacity="0.75"/>
<circle cx="1333.9" cy="478.9" r="4.2" fill="#b0502a" fill-opacity="0.75"/>
<line x1="643.6" y1="628.9" x2="806.0" y2="583.9" stroke="#d6d6d6" stroke-width="1.3"/>
<line x1="643.6" y1="632.5" x2="806.0" y2="587.5" stroke="#6a6a6a" stroke-width="0.8" stroke-opacity="0.8"/>
<line x1="654.5" y1="632.7" x2="817.6" y2="587.7" stroke="#d6d6d6" stroke-width="1.3"/>
<line x1="654.5" y1="636.3" x2="817.6" y2="591.3" stroke="#6a6a6a" stroke-width="0.8" stroke-opacity="0.8"/>
<line x1="665.4" y1="636.5" x2="829.3" y2="591.5" stroke="#d6d6d6" stroke-width="1.3"/>
<line x1="665.4" y1="640.1" x2="829.3" y2="595.1" stroke="#6a6a6a" stroke-width="0.8" stroke-opacity="0.8"/>
<line x1="676.3" y1="640.3" x2="840.9" y2="595.3" stroke="#d6d6d6" stroke-width="1.3"/>
<line x1="676.3" y1="643.9" x2="840.9" y2="598.9" stroke="#6a6a6a" stroke-width="0.8" stroke-opacity="0.8"/>
<line x1="687.3" y1="644.0" x2="852.6" y2="599.0" stroke="#d6d6d6" stroke-width="1.3"/>
<line x1="687.3" y1="647.6" x2="852.6" y2="602.6" stroke="#6a6a6a" stroke-width="0.8" stroke-opacity="0.8"/>
<line x1="698.2" y1="647.8" x2="864.2" y2="602.8" stroke="#d6d6d6" stroke-width="1.3"/>
<line x1="698.2" y1="651.4" x2="864.2" y2="606.4" stroke="#6a6a6a" stroke-width="0.8" stroke-opacity="0.8"/>
<line x1="709.1" y1="651.6" x2="875.9" y2="606.6" stroke="#d6d6d6" stroke-width="1.3"/>
<line x1="709.1" y1="655.2" x2="875.9" y2="610.2" stroke="#6a6a6a" stroke-width="0.8" stroke-opacity="0.8"/>
<line x1="720.0" y1="655.4" x2="887.5" y2="610.4" stroke="#d6d6d6" stroke-width="1.3"/>
<line x1="720.0" y1="659.0" x2="887.5" y2="614.0" stroke="#6a6a6a" stroke-width="0.8" stroke-opacity="0.8"/>
<line x1="643.6" y1="631.0" x2="806.0" y2="586.0" stroke="#4a4ab8" stroke-width="2.0"/>
<line x1="643.6" y1="631.0" x2="806.0" y2="586.0" stroke="#17177a" stroke-width="2.0" stroke-dasharray="3 1.2"/>
<line x1="654.5" y1="634.8" x2="817.6" y2="589.8" stroke="#4a4ab8" stroke-width="2.0"/>
<line x1="654.5" y1="634.8" x2="817.6" y2="589.8" stroke="#17177a" stroke-width="2.0" stroke-dasharray="3 1.2"/>
<line x1="665.4" y1="638.6" x2="829.3" y2="593.6" stroke="#4a4ab8" stroke-width="2.0"/>
<line x1="665.4" y1="638.6" x2="829.3" y2="593.6" stroke="#17177a" stroke-width="2.0" stroke-dasharray="3 1.2"/>
<line x1="676.3" y1="642.4" x2="840.9" y2="597.4" stroke="#4a4ab8" stroke-width="2.0"/>
<line x1="676.3" y1="642.4" x2="840.9" y2="597.4" stroke="#17177a" stroke-width="2.0" stroke-dasharray="3 1.2"/>
<line x1="687.3" y1="646.1" x2="852.6" y2="601.1" stroke="#4a4ab8" stroke-width="2.0"/>
<line x1="687.3" y1="646.1" x2="852.6" y2="601.1" stroke="#17177a" stroke-width="2.0" stroke-dasharray="3 1.2"/>
<line x1="698.2" y1="649.9" x2="864.2" y2="604.9" stroke="#4a4ab8" stroke-width="2.0"/>
<line x1="698.2" y1="649.9" x2="864.2" y2="604.9" stroke="#17177a" stroke-width="2.0" stroke-dasharray="3 1.2"/>
<line x1="709.1" y1="653.7" x2="875.9" y2="608.7" stroke="#4a4ab8" stroke-width="2.0"/>
<line x1="709.1" y1="653.7" x2="875.9" y2="608.7" stroke="#17177a" stroke-width="2.0" stroke-dasharray="3 1.2"/>
<line x1="720.0" y1="657.5" x2="887.5" y2="612.5" stroke="#4a4ab8" stroke-width="2.0"/>
<line x1="720.0" y1="657.5" x2="887.5" y2="612.5" stroke="#17177a" stroke-width="2.0" stroke-dasharray="3 1.2"/>
<line x1="803.8" y1="578.9" x2="965.0" y2="535.5" stroke="#d6d6d6" stroke-width="1.3"/>
<line x1="803.8" y1="582.5" x2="965.0" y2="539.1" stroke="#6a6a6a" stroke-width="0.8" stroke-opacity="0.8"/>
<line x1="814.7" y1="582.7" x2="976.4" y2="539.1" stroke="#d6d6d6" stroke-width="1.3"/>
<line x1="814.7" y1="586.3" x2="976.4" y2="542.7" stroke="#6a6a6a" stroke-width="0.8" stroke-opacity="0.8"/>
<line x1="825.6" y1="586.5" x2="987.9" y2="542.7" stroke="#d6d6d6" stroke-width="1.3"/>
<line x1="825.6" y1="590.1" x2="987.9" y2="546.3" stroke="#6a6a6a" stroke-width="0.8" stroke-opacity="0.8"/>
<line x1="836.5" y1="590.2" x2="999.3" y2="546.3" stroke="#d6d6d6" stroke-width="1.3"/>
<line x1="836.5" y1="593.8" x2="999.3" y2="549.9" stroke="#6a6a6a" stroke-width="0.8" stroke-opacity="0.8"/>
<line x1="847.4" y1="594.0" x2="1010.8" y2="549.9" stroke="#d6d6d6" stroke-width="1.3"/>
<line x1="847.4" y1="597.6" x2="1010.8" y2="553.5" stroke="#6a6a6a" stroke-width="0.8" stroke-opacity="0.8"/>
<line x1="858.3" y1="597.8" x2="1022.2" y2="553.5" stroke="#d6d6d6" stroke-width="1.3"/>
<line x1="858.3" y1="601.4" x2="1022.2" y2="557.1" stroke="#6a6a6a" stroke-width="0.8" stroke-opacity="0.8"/>
<line x1="869.2" y1="601.6" x2="1033.7" y2="557.1" stroke="#d6d6d6" stroke-width="1.3"/>
<line x1="869.2" y1="605.2" x2="1033.7" y2="560.7" stroke="#6a6a6a" stroke-width="0.8" stroke-opacity="0.8"/>
<line x1="880.2" y1="605.3" x2="1045.1" y2="560.7" stroke="#d6d6d6" stroke-width="1.3"/>
<line x1="880.2" y1="608.9" x2="1045.1" y2="564.3" stroke="#6a6a6a" stroke-width="0.8" stroke-opacity="0.8"/>
<line x1="891.1" y1="609.1" x2="1056.6" y2="564.3" stroke="#d6d6d6" stroke-width="1.3"/>
<line x1="891.1" y1="612.7" x2="1056.6" y2="567.9" stroke="#6a6a6a" stroke-width="0.8" stroke-opacity="0.8"/>
<line x1="902.0" y1="612.9" x2="1068.0" y2="567.9" stroke="#d6d6d6" stroke-width="1.3"/>
<line x1="902.0" y1="616.5" x2="1068.0" y2="571.5" stroke="#6a6a6a" stroke-width="0.8" stroke-opacity="0.8"/>
<line x1="803.8" y1="581.0" x2="965.0" y2="537.6" stroke="#4a4ab8" stroke-width="2.0"/>
<line x1="803.8" y1="581.0" x2="965.0" y2="537.6" stroke="#17177a" stroke-width="2.0" stroke-dasharray="3 1.2"/>
<line x1="814.7" y1="584.8" x2="976.4" y2="541.2" stroke="#4a4ab8" stroke-width="2.0"/>
<line x1="814.7" y1="584.8" x2="976.4" y2="541.2" stroke="#17177a" stroke-width="2.0" stroke-dasharray="3 1.2"/>
<line x1="825.6" y1="588.6" x2="987.9" y2="544.8" stroke="#4a4ab8" stroke-width="2.0"/>
<line x1="825.6" y1="588.6" x2="987.9" y2="544.8" stroke="#17177a" stroke-width="2.0" stroke-dasharray="3 1.2"/>
<line x1="836.5" y1="592.3" x2="999.3" y2="548.4" stroke="#4a4ab8" stroke-width="2.0"/>
<line x1="836.5" y1="592.3" x2="999.3" y2="548.4" stroke="#17177a" stroke-width="2.0" stroke-dasharray="3 1.2"/>
<line x1="847.4" y1="596.1" x2="1010.8" y2="552.0" stroke="#4a4ab8" stroke-width="2.0"/>
<line x1="847.4" y1="596.1" x2="1010.8" y2="552.0" stroke="#17177a" stroke-width="2.0" stroke-dasharray="3 1.2"/>
<line x1="858.3" y1="599.9" x2="1022.2" y2="555.6" stroke="#4a4ab8" stroke-width="2.0"/>
<line x1="858.3" y1="599.9" x2="1022.2" y2="555.6" stroke="#17177a" stroke-width="2.0" stroke-dasharray="3 1.2"/>
<line x1="869.2" y1="603.7" x2="1033.7" y2="559.2" stroke="#4a4ab8" stroke-width="2.0"/>
<line x1="869.2" y1="603.7" x2="1033.7" y2="559.2" stroke="#17177a" stroke-width="2.0" stroke-dasharray="3 1.2"/>
<line x1="880.2" y1="607.4" x2="1045.1" y2="562.8" stroke="#4a4ab8" stroke-width="2.0"/>
<line x1="880.2" y1="607.4" x2="1045.1" y2="562.8" stroke="#17177a" stroke-width="2.0" stroke-dasharray="3 1.2"/>
<line x1="891.1" y1="611.2" x2="1056.6" y2="566.4" stroke="#4a4ab8" stroke-width="2.0"/>
<line x1="891.1" y1="611.2" x2="1056.6" y2="566.4" stroke="#17177a" stroke-width="2.0" stroke-dasharray="3 1.2"/>
<line x1="902.0" y1="615.0" x2="1068.0" y2="570.0" stroke="#4a4ab8" stroke-width="2.0"/>
<line x1="902.0" y1="615.0" x2="1068.0" y2="570.0" stroke="#17177a" stroke-width="2.0" stroke-dasharray="3 1.2"/>
<line x1="965.3" y1="528.7" x2="1125.0" y2="484.9" stroke="#d6d6d6" stroke-width="1.3"/>
<line x1="965.3" y1="532.3" x2="1125.0" y2="488.5" stroke="#6a6a6a" stroke-width="0.8" stroke-opacity="0.8"/>
<line x1="976.1" y1="532.5" x2="1136.5" y2="488.6" stroke="#d6d6d6" stroke-width="1.3"/>
<line x1="976.1" y1="536.1" x2="1136.5" y2="492.2" stroke="#6a6a6a" stroke-width="0.8" stroke-opacity="0.8"/>
<line x1="986.8" y1="536.4" x2="1148.1" y2="492.3" stroke="#d6d6d6" stroke-width="1.3"/>
<line x1="986.8" y1="540.0" x2="1148.1" y2="495.9" stroke="#6a6a6a" stroke-width="0.8" stroke-opacity="0.8"/>
<line x1="997.6" y1="540.2" x2="1159.6" y2="495.9" stroke="#d6d6d6" stroke-width="1.3"/>
<line x1="997.6" y1="543.8" x2="1159.6" y2="499.5" stroke="#6a6a6a" stroke-width="0.8" stroke-opacity="0.8"/>
<line x1="1008.4" y1="544.0" x2="1171.2" y2="499.6" stroke="#d6d6d6" stroke-width="1.3"/>
<line x1="1008.4" y1="547.6" x2="1171.2" y2="503.2" stroke="#6a6a6a" stroke-width="0.8" stroke-opacity="0.8"/>
<line x1="1019.1" y1="547.9" x2="1182.7" y2="503.3" stroke="#d6d6d6" stroke-width="1.3"/>
<line x1="1019.1" y1="551.5" x2="1182.7" y2="506.9" stroke="#6a6a6a" stroke-width="0.8" stroke-opacity="0.8"/>
<line x1="1029.9" y1="551.7" x2="1194.3" y2="507.0" stroke="#d6d6d6" stroke-width="1.3"/>
<line x1="1029.9" y1="555.3" x2="1194.3" y2="510.6" stroke="#6a6a6a" stroke-width="0.8" stroke-opacity="0.8"/>
<line x1="1040.6" y1="555.6" x2="1205.8" y2="510.7" stroke="#d6d6d6" stroke-width="1.3"/>
<line x1="1040.6" y1="559.2" x2="1205.8" y2="514.3" stroke="#6a6a6a" stroke-width="0.8" stroke-opacity="0.8"/>
<line x1="1051.4" y1="559.4" x2="1217.4" y2="514.4" stroke="#d6d6d6" stroke-width="1.3"/>
<line x1="1051.4" y1="563.0" x2="1217.4" y2="518.0" stroke="#6a6a6a" stroke-width="0.8" stroke-opacity="0.8"/>
<line x1="1062.2" y1="563.2" x2="1228.9" y2="518.0" stroke="#d6d6d6" stroke-width="1.3"/>
<line x1="1062.2" y1="566.8" x2="1228.9" y2="521.6" stroke="#6a6a6a" stroke-width="0.8" stroke-opacity="0.8"/>
<line x1="1072.9" y1="567.1" x2="1240.5" y2="521.7" stroke="#d6d6d6" stroke-width="1.3"/>
<line x1="1072.9" y1="570.7" x2="1240.5" y2="525.3" stroke="#6a6a6a" stroke-width="0.8" stroke-opacity="0.8"/>
<line x1="1083.7" y1="570.9" x2="1252.0" y2="525.4" stroke="#d6d6d6" stroke-width="1.3"/>
<line x1="1083.7" y1="574.5" x2="1252.0" y2="529.0" stroke="#6a6a6a" stroke-width="0.8" stroke-opacity="0.8"/>
<line x1="965.3" y1="530.8" x2="1125.0" y2="487.0" stroke="#4a4ab8" stroke-width="2.0"/>
<line x1="965.3" y1="530.8" x2="1125.0" y2="487.0" stroke="#17177a" stroke-width="2.0" stroke-dasharray="3 1.2"/>
<line x1="976.1" y1="534.6" x2="1136.5" y2="490.7" stroke="#4a4ab8" stroke-width="2.0"/>
<line x1="976.1" y1="534.6" x2="1136.5" y2="490.7" stroke="#17177a" stroke-width="2.0" stroke-dasharray="3 1.2"/>
<line x1="986.8" y1="538.5" x2="1148.1" y2="494.4" stroke="#4a4ab8" stroke-width="2.0"/>
<line x1="986.8" y1="538.5" x2="1148.1" y2="494.4" stroke="#17177a" stroke-width="2.0" stroke-dasharray="3 1.2"/>
<line x1="997.6" y1="542.3" x2="1159.6" y2="498.0" stroke="#4a4ab8" stroke-width="2.0"/>
<line x1="997.6" y1="542.3" x2="1159.6" y2="498.0" stroke="#17177a" stroke-width="2.0" stroke-dasharray="3 1.2"/>
<line x1="1008.4" y1="546.1" x2="1171.2" y2="501.7" stroke="#4a4ab8" stroke-width="2.0"/>
<line x1="1008.4" y1="546.1" x2="1171.2" y2="501.7" stroke="#17177a" stroke-width="2.0" stroke-dasharray="3 1.2"/>
<line x1="1019.1" y1="550.0" x2="1182.7" y2="505.4" stroke="#4a4ab8" stroke-width="2.0"/>
<line x1="1019.1" y1="550.0" x2="1182.7" y2="505.4" stroke="#17177a" stroke-width="2.0" stroke-dasharray="3 1.2"/>
<line x1="1029.9" y1="553.8" x2="1194.3" y2="509.1" stroke="#4a4ab8" stroke-width="2.0"/>
<line x1="1029.9" y1="553.8" x2="1194.3" y2="509.1" stroke="#17177a" stroke-width="2.0" stroke-dasharray="3 1.2"/>
<line x1="1040.6" y1="557.7" x2="1205.8" y2="512.8" stroke="#4a4ab8" stroke-width="2.0"/>
<line x1="1040.6" y1="557.7" x2="1205.8" y2="512.8" stroke="#17177a" stroke-width="2.0" stroke-dasharray="3 1.2"/>
<line x1="1051.4" y1="561.5" x2="1217.4" y2="516.5" stroke="#4a4ab8" stroke-width="2.0"/>
<line x1="1051.4" y1="561.5" x2="1217.4" y2="516.5" stroke="#17177a" stroke-width="2.0" stroke-dasharray="3 1.2"/>
<line x1="1062.2" y1="565.3" x2="1228.9" y2="520.1" stroke="#4a4ab8" stroke-width="2.0"/>
<line x1="1062.2" y1="565.3" x2="1228.9" y2="520.1" stroke="#17177a" stroke-width="2.0" stroke-dasharray="3 1.2"/>
<line x1="1072.9" y1="569.2" x2="1240.5" y2="523.8" stroke="#4a4ab8" stroke-width="2.0"/>
<line x1="1072.9" y1="569.2" x2="1240.5" y2="523.8" stroke="#17177a" stroke-width="2.0" stroke-dasharray="3 1.2"/>
<line x1="1083.7" y1="573.0" x2="1252.0" y2="527.5" stroke="#4a4ab8" stroke-width="2.0"/>
<line x1="1083.7" y1="573.0" x2="1252.0" y2="527.5" stroke="#17177a" stroke-width="2.0" stroke-dasharray="3 1.2"/>
<line x1="1125.5" y1="478.9" x2="1291.6" y2="434.9" stroke="#d6d6d6" stroke-width="1.3"/>
<line x1="1125.5" y1="482.5" x2="1291.6" y2="438.5" stroke="#6a6a6a" stroke-width="0.8" stroke-opacity="0.8"/>
<line x1="1136.3" y1="482.7" x2="1302.3" y2="438.6" stroke="#d6d6d6" stroke-width="1.3"/>
<line x1="1136.3" y1="486.3" x2="1302.3" y2="442.2" stroke="#6a6a6a" stroke-width="0.8" stroke-opacity="0.8"/>
<line x1="1147.1" y1="486.4" x2="1313.0" y2="442.3" stroke="#d6d6d6" stroke-width="1.3"/>
<line x1="1147.1" y1="490.0" x2="1313.0" y2="445.9" stroke="#6a6a6a" stroke-width="0.8" stroke-opacity="0.8"/>
<line x1="1157.9" y1="490.2" x2="1323.8" y2="446.0" stroke="#d6d6d6" stroke-width="1.3"/>
<line x1="1157.9" y1="493.8" x2="1323.8" y2="449.6" stroke="#6a6a6a" stroke-width="0.8" stroke-opacity="0.8"/>
<line x1="1168.7" y1="494.0" x2="1334.5" y2="449.7" stroke="#d6d6d6" stroke-width="1.3"/>
<line x1="1168.7" y1="497.6" x2="1334.5" y2="453.3" stroke="#6a6a6a" stroke-width="0.8" stroke-opacity="0.8"/>
<line x1="1179.5" y1="497.7" x2="1345.2" y2="453.4" stroke="#d6d6d6" stroke-width="1.3"/>
<line x1="1179.5" y1="501.3" x2="1345.2" y2="457.0" stroke="#6a6a6a" stroke-width="0.8" stroke-opacity="0.8"/>
<line x1="1190.3" y1="501.5" x2="1355.9" y2="457.1" stroke="#d6d6d6" stroke-width="1.3"/>
<line x1="1190.3" y1="505.1" x2="1355.9" y2="460.7" stroke="#6a6a6a" stroke-width="0.8" stroke-opacity="0.8"/>
<line x1="1201.2" y1="505.3" x2="1366.7" y2="460.7" stroke="#d6d6d6" stroke-width="1.3"/>
<line x1="1201.2" y1="508.9" x2="1366.7" y2="464.3" stroke="#6a6a6a" stroke-width="0.8" stroke-opacity="0.8"/>
<line x1="1212.0" y1="509.1" x2="1377.4" y2="464.4" stroke="#d6d6d6" stroke-width="1.3"/>
<line x1="1212.0" y1="512.7" x2="1377.4" y2="468.0" stroke="#6a6a6a" stroke-width="0.8" stroke-opacity="0.8"/>
<line x1="1222.8" y1="512.8" x2="1388.1" y2="468.1" stroke="#d6d6d6" stroke-width="1.3"/>
<line x1="1222.8" y1="516.4" x2="1388.1" y2="471.7" stroke="#6a6a6a" stroke-width="0.8" stroke-opacity="0.8"/>
<line x1="1233.6" y1="516.6" x2="1398.8" y2="471.8" stroke="#d6d6d6" stroke-width="1.3"/>
<line x1="1233.6" y1="520.2" x2="1398.8" y2="475.4" stroke="#6a6a6a" stroke-width="0.8" stroke-opacity="0.8"/>
<line x1="1244.4" y1="520.4" x2="1409.6" y2="475.5" stroke="#d6d6d6" stroke-width="1.3"/>
<line x1="1244.4" y1="524.0" x2="1409.6" y2="479.1" stroke="#6a6a6a" stroke-width="0.8" stroke-opacity="0.8"/>
<line x1="1255.2" y1="524.1" x2="1420.3" y2="479.2" stroke="#d6d6d6" stroke-width="1.3"/>
<line x1="1255.2" y1="527.7" x2="1420.3" y2="482.8" stroke="#6a6a6a" stroke-width="0.8" stroke-opacity="0.8"/>
<line x1="1266.0" y1="527.9" x2="1431.0" y2="482.9" stroke="#d6d6d6" stroke-width="1.3"/>
<line x1="1266.0" y1="531.5" x2="1431.0" y2="486.5" stroke="#6a6a6a" stroke-width="0.8" stroke-opacity="0.8"/>
<line x1="1125.5" y1="481.0" x2="1291.6" y2="437.0" stroke="#4a4ab8" stroke-width="2.0"/>
<line x1="1125.5" y1="481.0" x2="1291.6" y2="437.0" stroke="#17177a" stroke-width="2.0" stroke-dasharray="3 1.2"/>
<line x1="1136.3" y1="484.8" x2="1302.3" y2="440.7" stroke="#4a4ab8" stroke-width="2.0"/>
<line x1="1136.3" y1="484.8" x2="1302.3" y2="440.7" stroke="#17177a" stroke-width="2.0" stroke-dasharray="3 1.2"/>
<line x1="1147.1" y1="488.5" x2="1313.0" y2="444.4" stroke="#4a4ab8" stroke-width="2.0"/>
<line x1="1147.1" y1="488.5" x2="1313.0" y2="444.4" stroke="#17177a" stroke-width="2.0" stroke-dasharray="3 1.2"/>
<line x1="1157.9" y1="492.3" x2="1323.8" y2="448.1" stroke="#4a4ab8" stroke-width="2.0"/>
<line x1="1157.9" y1="492.3" x2="1323.8" y2="448.1" stroke="#17177a" stroke-width="2.0" stroke-dasharray="3 1.2"/>
<line x1="1168.7" y1="496.1" x2="1334.5" y2="451.8" stroke="#4a4ab8" stroke-width="2.0"/>
<line x1="1168.7" y1="496.1" x2="1334.5" y2="451.8" stroke="#17177a" stroke-width="2.0" stroke-dasharray="3 1.2"/>
<line x1="1179.5" y1="499.8" x2="1345.2" y2="455.5" stroke="#4a4ab8" stroke-width="2.0"/>
<line x1="1179.5" y1="499.8" x2="1345.2" y2="455.5" stroke="#17177a" stroke-width="2.0" stroke-dasharray="3 1.2"/>
<line x1="1190.3" y1="503.6" x2="1355.9" y2="459.2" stroke="#4a4ab8" stroke-width="2.0"/>
<line x1="1190.3" y1="503.6" x2="1355.9" y2="459.2" stroke="#17177a" stroke-width="2.0" stroke-dasharray="3 1.2"/>
<line x1="1201.2" y1="507.4" x2="1366.7" y2="462.8" stroke="#4a4ab8" stroke-width="2.0"/>
<line x1="1201.2" y1="507.4" x2="1366.7" y2="462.8" stroke="#17177a" stroke-width="2.0" stroke-dasharray="3 1.2"/>
<line x1="1212.0" y1="511.2" x2="1377.4" y2="466.5" stroke="#4a4ab8" stroke-width="2.0"/>
<line x1="1212.0" y1="511.2" x2="1377.4" y2="466.5" stroke="#17177a" stroke-width="2.0" stroke-dasharray="3 1.2"/>
<line x1="1222.8" y1="514.9" x2="1388.1" y2="470.2" stroke="#4a4ab8" stroke-width="2.0"/>
<line x1="1222.8" y1="514.9" x2="1388.1" y2="470.2" stroke="#17177a" stroke-width="2.0" stroke-dasharray="3 1.2"/>
<line x1="1233.6" y1="518.7" x2="1398.8" y2="473.9" stroke="#4a4ab8" stroke-width="2.0"/>
<line x1="1233.6" y1="518.7" x2="1398.8" y2="473.9" stroke="#17177a" stroke-width="2.0" stroke-dasharray="3 1.2"/>
<line x1="1244.4" y1="522.5" x2="1409.6" y2="477.6" stroke="#4a4ab8" stroke-width="2.0"/>
<line x1="1244.4" y1="522.5" x2="1409.6" y2="477.6" stroke="#17177a" stroke-width="2.0" stroke-dasharray="3 1.2"/>
<line x1="1255.2" y1="526.2" x2="1420.3" y2="481.3" stroke="#4a4ab8" stroke-width="2.0"/>
<line x1="1255.2" y1="526.2" x2="1420.3" y2="481.3" stroke="#17177a" stroke-width="2.0" stroke-dasharray="3 1.2"/>
<line x1="1266.0" y1="530.0" x2="1431.0" y2="485.0" stroke="#4a4ab8" stroke-width="2.0"/>
<line x1="1266.0" y1="530.0" x2="1431.0" y2="485.0" stroke="#17177a" stroke-width="2.0" stroke-dasharray="3 1.2"/>
<circle cx="806.0" cy="586.0" r="4.5" fill="#cf4c18"/>
<circle cx="817.6" cy="589.8" r="4.5" fill="#cf4c18"/>
<circle cx="829.3" cy="593.6" r="4.5" fill="#cf4c18"/>
<circle cx="840.9" cy="597.4" r="4.5" fill="#cf4c18"/>
<circle cx="852.6" cy="601.1" r="4.5" fill="#cf4c18"/>
<circle cx="864.2" cy="604.9" r="4.5" fill="#cf4c18"/>
<circle cx="875.9" cy="608.7" r="4.5" fill="#cf4c18"/>
<circle cx="887.5" cy="612.5" r="4.5" fill="#cf4c18"/>
<line x1="643.6" y1="631.0" x2="720.0" y2="657.5" stroke="#4a4ab8" stroke-width="2.0"/>
<line x1="643.6" y1="631.0" x2="720.0" y2="657.5" stroke="#17177a" stroke-width="2.0" stroke-dasharray="3 1.2"/>
<line x1="684.2" y1="619.8" x2="761.9" y2="646.2" stroke="#4a4ab8" stroke-width="2.0"/>
<line x1="684.2" y1="619.8" x2="761.9" y2="646.2" stroke="#17177a" stroke-width="2.0" stroke-dasharray="3 1.2"/>
<line x1="724.8" y1="608.5" x2="803.8" y2="635.0" stroke="#4a4ab8" stroke-width="2.0"/>
<line x1="724.8" y1="608.5" x2="803.8" y2="635.0" stroke="#17177a" stroke-width="2.0" stroke-dasharray="3 1.2"/>
<line x1="765.4" y1="597.2" x2="845.6" y2="623.8" stroke="#4a4ab8" stroke-width="2.0"/>
<line x1="765.4" y1="597.2" x2="845.6" y2="623.8" stroke="#17177a" stroke-width="2.0" stroke-dasharray="3 1.2"/>
<line x1="806.0" y1="586.0" x2="887.5" y2="612.5" stroke="#4a4ab8" stroke-width="2.0"/>
<line x1="806.0" y1="586.0" x2="887.5" y2="612.5" stroke="#17177a" stroke-width="2.0" stroke-dasharray="3 1.2"/>
<circle cx="965.0" cy="537.6" r="4.5" fill="#cf4c18"/>
<circle cx="976.4" cy="541.2" r="4.5" fill="#cf4c18"/>
<circle cx="987.9" cy="544.8" r="4.5" fill="#cf4c18"/>
<circle cx="999.3" cy="548.4" r="4.5" fill="#cf4c18"/>
<circle cx="1010.8" cy="552.0" r="4.5" fill="#cf4c18"/>
<circle cx="1022.2" cy="555.6" r="4.5" fill="#cf4c18"/>
<circle cx="1033.7" cy="559.2" r="4.5" fill="#cf4c18"/>
<circle cx="1045.1" cy="562.8" r="4.5" fill="#cf4c18"/>
<circle cx="1056.6" cy="566.4" r="4.5" fill="#cf4c18"/>
<circle cx="1068.0" cy="570.0" r="4.5" fill="#cf4c18"/>
<line x1="803.8" y1="581.0" x2="902.0" y2="615.0" stroke="#4a4ab8" stroke-width="2.0"/>
<line x1="803.8" y1="581.0" x2="902.0" y2="615.0" stroke="#17177a" stroke-width="2.0" stroke-dasharray="3 1.2"/>
<line x1="844.1" y1="570.1" x2="943.5" y2="603.8" stroke="#4a4ab8" stroke-width="2.0"/>
<line x1="844.1" y1="570.1" x2="943.5" y2="603.8" stroke="#17177a" stroke-width="2.0" stroke-dasharray="3 1.2"/>
<line x1="884.4" y1="559.3" x2="985.0" y2="592.5" stroke="#4a4ab8" stroke-width="2.0"/>
<line x1="884.4" y1="559.3" x2="985.0" y2="592.5" stroke="#17177a" stroke-width="2.0" stroke-dasharray="3 1.2"/>
<line x1="924.7" y1="548.5" x2="1026.5" y2="581.2" stroke="#4a4ab8" stroke-width="2.0"/>
<line x1="924.7" y1="548.5" x2="1026.5" y2="581.2" stroke="#17177a" stroke-width="2.0" stroke-dasharray="3 1.2"/>
<line x1="965.0" y1="537.6" x2="1068.0" y2="570.0" stroke="#4a4ab8" stroke-width="2.0"/>
<line x1="965.0" y1="537.6" x2="1068.0" y2="570.0" stroke="#17177a" stroke-width="2.0" stroke-dasharray="3 1.2"/>
<circle cx="1125.0" cy="487.0" r="4.5" fill="#cf4c18"/>
<circle cx="1136.5" cy="490.7" r="4.5" fill="#cf4c18"/>
<circle cx="1148.1" cy="494.4" r="4.5" fill="#cf4c18"/>
<circle cx="1159.6" cy="498.0" r="4.5" fill="#cf4c18"/>
<circle cx="1171.2" cy="501.7" r="4.5" fill="#cf4c18"/>
<circle cx="1182.7" cy="505.4" r="4.5" fill="#cf4c18"/>
<circle cx="1194.3" cy="509.1" r="4.5" fill="#cf4c18"/>
<circle cx="1205.8" cy="512.8" r="4.5" fill="#cf4c18"/>
<circle cx="1217.4" cy="516.5" r="4.5" fill="#cf4c18"/>
<circle cx="1228.9" cy="520.1" r="4.5" fill="#cf4c18"/>
<circle cx="1240.5" cy="523.8" r="4.5" fill="#cf4c18"/>
<circle cx="1252.0" cy="527.5" r="4.5" fill="#cf4c18"/>
<line x1="965.3" y1="530.8" x2="1083.7" y2="573.0" stroke="#4a4ab8" stroke-width="2.0"/>
<line x1="965.3" y1="530.8" x2="1083.7" y2="573.0" stroke="#17177a" stroke-width="2.0" stroke-dasharray="3 1.2"/>
<line x1="1005.2" y1="519.8" x2="1125.8" y2="561.6" stroke="#4a4ab8" stroke-width="2.0"/>
<line x1="1005.2" y1="519.8" x2="1125.8" y2="561.6" stroke="#17177a" stroke-width="2.0" stroke-dasharray="3 1.2"/>
<line x1="1045.2" y1="508.9" x2="1167.8" y2="550.2" stroke="#4a4ab8" stroke-width="2.0"/>
<line x1="1045.2" y1="508.9" x2="1167.8" y2="550.2" stroke="#17177a" stroke-width="2.0" stroke-dasharray="3 1.2"/>
<line x1="1085.1" y1="497.9" x2="1209.9" y2="538.9" stroke="#4a4ab8" stroke-width="2.0"/>
<line x1="1085.1" y1="497.9" x2="1209.9" y2="538.9" stroke="#17177a" stroke-width="2.0" stroke-dasharray="3 1.2"/>
<line x1="1125.0" y1="487.0" x2="1252.0" y2="527.5" stroke="#4a4ab8" stroke-width="2.0"/>
<line x1="1125.0" y1="487.0" x2="1252.0" y2="527.5" stroke="#17177a" stroke-width="2.0" stroke-dasharray="3 1.2"/>
<line x1="1125.5" y1="481.0" x2="1266.0" y2="530.0" stroke="#4a4ab8" stroke-width="2.0"/>
<line x1="1125.5" y1="481.0" x2="1266.0" y2="530.0" stroke="#17177a" stroke-width="2.0" stroke-dasharray="3 1.2"/>
<line x1="1167.0" y1="470.0" x2="1307.2" y2="518.8" stroke="#4a4ab8" stroke-width="2.0"/>
<line x1="1167.0" y1="470.0" x2="1307.2" y2="518.8" stroke="#17177a" stroke-width="2.0" stroke-dasharray="3 1.2"/>
<line x1="1208.5" y1="459.0" x2="1348.5" y2="507.5" stroke="#4a4ab8" stroke-width="2.0"/>
<line x1="1208.5" y1="459.0" x2="1348.5" y2="507.5" stroke="#17177a" stroke-width="2.0" stroke-dasharray="3 1.2"/>
<line x1="1250.1" y1="448.0" x2="1389.8" y2="496.2" stroke="#4a4ab8" stroke-width="2.0"/>
<line x1="1250.1" y1="448.0" x2="1389.8" y2="496.2" stroke="#17177a" stroke-width="2.0" stroke-dasharray="3 1.2"/>
<line x1="1291.6" y1="437.0" x2="1431.0" y2="485.0" stroke="#4a4ab8" stroke-width="2.0"/>
<line x1="1291.6" y1="437.0" x2="1431.0" y2="485.0" stroke="#17177a" stroke-width="2.0" stroke-dasharray="3 1.2"/>
<circle cx="475.5" cy="759.0" r="4.6" fill="url(#dg)"/>
<circle cx="475.5" cy="769.6" r="4.6" fill="url(#dg)"/>
<circle cx="475.5" cy="891.0" r="4.4" fill="url(#dg)"/>
<circle cx="665.3" cy="696.4" r="4.6" fill="url(#dg)"/>
<circle cx="665.3" cy="709.4" r="4.6" fill="url(#dg)"/>
<circle cx="665.3" cy="796.0" r="4.4" fill="url(#dg)"/>
<circle cx="695.6" cy="706.8" r="4.6" fill="url(#dg)"/>
<circle cx="695.6" cy="719.7" r="4.6" fill="url(#dg)"/>
<circle cx="695.6" cy="806.6" r="4.4" fill="url(#dg)"/>
<circle cx="830.2" cy="639.0" r="4.6" fill="url(#dg)"/>
<circle cx="830.2" cy="655.5" r="4.6" fill="url(#dg)"/>
<circle cx="830.2" cy="768.4" r="4.4" fill="url(#dg)"/>
<circle cx="872.2" cy="654.0" r="4.6" fill="url(#dg)"/>
<circle cx="872.2" cy="670.0" r="4.6" fill="url(#dg)"/>
<circle cx="872.2" cy="782.8" r="4.4" fill="url(#dg)"/>
<circle cx="975.3" cy="583.0" r="4.6" fill="url(#dg)"/>
<circle cx="975.3" cy="613.0" r="4.6" fill="url(#dg)"/>
<circle cx="975.3" cy="734.7" r="4.4" fill="url(#dg)"/>
<circle cx="1022.7" cy="600.5" r="4.6" fill="url(#dg)"/>
<circle cx="1022.7" cy="630.0" r="4.6" fill="url(#dg)"/>
<circle cx="1022.7" cy="751.2" r="4.4" fill="url(#dg)"/>
<circle cx="1069.0" cy="616.7" r="4.6" fill="url(#dg)"/>
<circle cx="1069.0" cy="645.8" r="4.6" fill="url(#dg)"/>
<circle cx="1069.0" cy="767.3" r="4.4" fill="url(#dg)"/>
<circle cx="1138.5" cy="534.0" r="4.6" fill="url(#dg)"/>
<circle cx="1138.5" cy="564.6" r="4.6" fill="url(#dg)"/>
<circle cx="1138.5" cy="729.5" r="4.4" fill="url(#dg)"/>
<circle cx="1193.5" cy="554.3" r="4.6" fill="url(#dg)"/>
<circle cx="1193.5" cy="584.0" r="4.6" fill="url(#dg)"/>
<circle cx="1193.5" cy="748.4" r="4.4" fill="url(#dg)"/>
<circle cx="1247.8" cy="573.5" r="4.6" fill="url(#dg)"/>
<circle cx="1247.8" cy="603.0" r="4.6" fill="url(#dg)"/>
<circle cx="1247.8" cy="767.3" r="4.4" fill="url(#dg)"/>
<circle cx="1309.6" cy="519.0" r="4.6" fill="url(#dg)"/>
<circle cx="1309.6" cy="716.5" r="4.4" fill="url(#dg)"/>
<circle cx="1364.3" cy="509.0" r="4.6" fill="url(#dg)"/>
<circle cx="1364.3" cy="535.8" r="4.6" fill="url(#dg)"/>
<circle cx="1364.3" cy="735.4" r="4.4" fill="url(#dg)"/>
<circle cx="1418.6" cy="527.5" r="4.6" fill="url(#dg)"/>
<circle cx="1418.6" cy="555.0" r="4.6" fill="url(#dg)"/>
<circle cx="1418.6" cy="754.6" r="4.4" fill="url(#dg)"/>
<circle cx="1497.4" cy="429.6" r="4.6" fill="url(#dg)"/>
<circle cx="1497.4" cy="455.3" r="4.6" fill="url(#dg)"/>
<circle cx="1497.4" cy="724.0" r="4.4" fill="url(#dg)"/>
<circle cx="1569.3" cy="454.0" r="4.6" fill="url(#dg)"/>
<circle cx="1569.3" cy="481.0" r="4.6" fill="url(#dg)"/>
<circle cx="1569.3" cy="749.8" r="4.4" fill="url(#dg)"/>
<circle cx="1640.2" cy="480.0" r="4.6" fill="url(#dg)"/>
<circle cx="1640.2" cy="505.6" r="4.6" fill="url(#dg)"/>
<circle cx="1640.2" cy="774.4" r="4.4" fill="url(#dg)"/>
<circle cx="643.6" cy="631.0" r="4.7" fill="url(#dg)"/>
<circle cx="654.5" cy="634.8" r="4.7" fill="url(#dg)"/>
<circle cx="665.4" cy="638.6" r="4.7" fill="url(#dg)"/>
<circle cx="676.3" cy="642.4" r="4.7" fill="url(#dg)"/>
<circle cx="687.3" cy="646.1" r="4.7" fill="url(#dg)"/>
<circle cx="698.2" cy="649.9" r="4.7" fill="url(#dg)"/>
<circle cx="709.1" cy="653.7" r="4.7" fill="url(#dg)"/>
<circle cx="720.0" cy="657.5" r="4.7" fill="url(#dg)"/>
<circle cx="684.2" cy="619.8" r="4.5" fill="url(#dg)"/>
<circle cx="761.9" cy="646.2" r="4.5" fill="url(#dg)"/>
<circle cx="724.8" cy="608.5" r="4.5" fill="url(#dg)"/>
<circle cx="803.8" cy="635.0" r="4.5" fill="url(#dg)"/>
<circle cx="765.4" cy="597.2" r="4.5" fill="url(#dg)"/>
<circle cx="845.6" cy="623.8" r="4.5" fill="url(#dg)"/>
<circle cx="803.8" cy="581.0" r="4.7" fill="url(#dg)"/>
<circle cx="814.7" cy="584.8" r="4.7" fill="url(#dg)"/>
<circle cx="825.6" cy="588.6" r="4.7" fill="url(#dg)"/>
<circle cx="836.5" cy="592.3" r="4.7" fill="url(#dg)"/>
<circle cx="847.4" cy="596.1" r="4.7" fill="url(#dg)"/>
<circle cx="858.3" cy="599.9" r="4.7" fill="url(#dg)"/>
<circle cx="869.2" cy="603.7" r="4.7" fill="url(#dg)"/>
<circle cx="880.2" cy="607.4" r="4.7" fill="url(#dg)"/>
<circle cx="891.1" cy="611.2" r="4.7" fill="url(#dg)"/>
<circle cx="902.0" cy="615.0" r="4.7" fill="url(#dg)"/>
<circle cx="844.1" cy="570.1" r="4.5" fill="url(#dg)"/>
<circle cx="943.5" cy="603.8" r="4.5" fill="url(#dg)"/>
<circle cx="884.4" cy="559.3" r="4.5" fill="url(#dg)"/>
<circle cx="985.0" cy="592.5" r="4.5" fill="url(#dg)"/>
<circle cx="924.7" cy="548.5" r="4.5" fill="url(#dg)"/>
<circle cx="1026.5" cy="581.2" r="4.5" fill="url(#dg)"/>
<circle cx="965.3" cy="530.8" r="4.7" fill="url(#dg)"/>
<circle cx="976.1" cy="534.6" r="4.7" fill="url(#dg)"/>
<circle cx="986.8" cy="538.5" r="4.7" fill="url(#dg)"/>
<circle cx="997.6" cy="542.3" r="4.7" fill="url(#dg)"/>
<circle cx="1008.4" cy="546.1" r="4.7" fill="url(#dg)"/>
<circle cx="1019.1" cy="550.0" r="4.7" fill="url(#dg)"/>
<circle cx="1029.9" cy="553.8" r="4.7" fill="url(#dg)"/>
<circle cx="1040.6" cy="557.7" r="4.7" fill="url(#dg)"/>
<circle cx="1051.4" cy="561.5" r="4.7" fill="url(#dg)"/>
<circle cx="1062.2" cy="565.3" r="4.7" fill="url(#dg)"/>
<circle cx="1072.9" cy="569.2" r="4.7" fill="url(#dg)"/>
<circle cx="1083.7" cy="573.0" r="4.7" fill="url(#dg)"/>
<circle cx="1005.2" cy="519.8" r="4.5" fill="url(#dg)"/>
<circle cx="1125.8" cy="561.6" r="4.5" fill="url(#dg)"/>
<circle cx="1045.2" cy="508.9" r="4.5" fill="url(#dg)"/>
<circle cx="1167.8" cy="550.2" r="4.5" fill="url(#dg)"/>
<circle cx="1085.1" cy="497.9" r="4.5" fill="url(#dg)"/>
<circle cx="1209.9" cy="538.9" r="4.5" fill="url(#dg)"/>
<circle cx="1125.5" cy="481.0" r="4.7" fill="url(#dg)"/>
<circle cx="1136.3" cy="484.8" r="4.7" fill="url(#dg)"/>
<circle cx="1147.1" cy="488.5" r="4.7" fill="url(#dg)"/>
<circle cx="1157.9" cy="492.3" r="4.7" fill="url(#dg)"/>
<circle cx="1168.7" cy="496.1" r="4.7" fill="url(#dg)"/>
<circle cx="1179.5" cy="499.8" r="4.7" fill="url(#dg)"/>
<circle cx="1190.3" cy="503.6" r="4.7" fill="url(#dg)"/>
<circle cx="1201.2" cy="507.4" r="4.7" fill="url(#dg)"/>
<circle cx="1212.0" cy="511.2" r="4.7" fill="url(#dg)"/>
<circle cx="1222.8" cy="514.9" r="4.7" fill="url(#dg)"/>
<circle cx="1233.6" cy="518.7" r="4.7" fill="url(#dg)"/>
<circle cx="1244.4" cy="522.5" r="4.7" fill="url(#dg)"/>
<circle cx="1255.2" cy="526.2" r="4.7" fill="url(#dg)"/>
<circle cx="1266.0" cy="530.0" r="4.7" fill="url(#dg)"/>
<circle cx="1167.0" cy="470.0" r="4.5" fill="url(#dg)"/>
<circle cx="1307.2" cy="518.8" r="4.5" fill="url(#dg)"/>
<circle cx="1208.5" cy="459.0" r="4.5" fill="url(#dg)"/>
<circle cx="1348.5" cy="507.5" r="4.5" fill="url(#dg)"/>
<circle cx="1250.1" cy="448.0" r="4.5" fill="url(#dg)"/>
<circle cx="1389.8" cy="496.2" r="4.5" fill="url(#dg)"/>
<circle cx="1291.6" cy="437.0" r="4.7" fill="url(#dg)"/>
<circle cx="1302.3" cy="440.7" r="4.7" fill="url(#dg)"/>
<circle cx="1313.0" cy="444.4" r="4.7" fill="url(#dg)"/>
<circle cx="1323.8" cy="448.1" r="4.7" fill="url(#dg)"/>
<circle cx="1334.5" cy="451.8" r="4.7" fill="url(#dg)"/>
<circle cx="1345.2" cy="455.5" r="4.7" fill="url(#dg)"/>
<circle cx="1355.9" cy="459.2" r="4.7" fill="url(#dg)"/>
<circle cx="1366.7" cy="462.8" r="4.7" fill="url(#dg)"/>
<circle cx="1377.4" cy="466.5" r="4.7" fill="url(#dg)"/>
<circle cx="1388.1" cy="470.2" r="4.7" fill="url(#dg)"/>
<circle cx="1398.8" cy="473.9" r="4.7" fill="url(#dg)"/>
<circle cx="1409.6" cy="477.6" r="4.7" fill="url(#dg)"/>
<circle cx="1420.3" cy="481.3" r="4.7" fill="url(#dg)"/>
<circle cx="1431.0" cy="485.0" r="4.7" fill="url(#dg)"/>
<circle cx="475.7" cy="705.6" r="4.6" fill="url(#dg)"/>
<circle cx="485.7" cy="703.4" r="4.6" fill="url(#dg)"/>
<circle cx="499.0" cy="699.6" r="4.6" fill="url(#dg)"/>
<circle cx="513.0" cy="695.5" r="4.6" fill="url(#dg)"/>
<circle cx="633.0" cy="660.5" r="4.6" fill="url(#dg)"/>
<circle cx="642.7" cy="661.0" r="4.6" fill="url(#dg)"/>
<circle cx="656.0" cy="657.0" r="4.6" fill="url(#dg)"/>
<circle cx="670.0" cy="654.0" r="4.6" fill="url(#dg)"/>
<circle cx="680.0" cy="651.0" r="4.6" fill="url(#dg)"/>
<circle cx="1305.0" cy="433.0" r="4.6" fill="url(#dg)"/>
<circle cx="1316.0" cy="433.5" r="4.6" fill="url(#dg)"/>
<circle cx="1341.7" cy="425.8" r="4.6" fill="url(#dg)"/>
<circle cx="1461.0" cy="388.0" r="4.6" fill="url(#dg)"/>
<circle cx="1483.0" cy="378.0" r="4.6" fill="url(#dg)"/>
<circle cx="1491.0" cy="376.0" r="4.6" fill="url(#dg)"/>
<circle cx="1499.0" cy="374.0" r="4.6" fill="url(#dg)"/>
<circle cx="1507.0" cy="373.0" r="4.6" fill="url(#dg)"/>
<circle cx="1513.0" cy="371.0" r="4.6" fill="url(#dg)"/>
<circle cx="1535.0" cy="367.0" r="4.6" fill="url(#dg)"/>
<circle cx="1665.0" cy="331.0" r="4.6" fill="url(#dg)"/>
<circle cx="1690.0" cy="325.0" r="4.6" fill="url(#dg)"/>
<circle cx="1703.0" cy="322.0" r="4.6" fill="url(#dg)"/>
<circle cx="1367.0" cy="456.0" r="4.6" fill="url(#dg)"/>
<circle cx="1377.0" cy="454.0" r="4.6" fill="url(#dg)"/>
<circle cx="1388.0" cy="451.0" r="4.6" fill="url(#dg)"/>
<circle cx="1402.0" cy="447.0" r="4.6" fill="url(#dg)"/>
<circle cx="1470.0" cy="429.0" r="4.6" fill="url(#dg)"/>
<circle cx="1531.0" cy="412.0" r="4.6" fill="url(#dg)"/>
<circle cx="1546.0" cy="407.0" r="4.6" fill="url(#dg)"/>
<circle cx="1558.0" cy="402.0" r="4.6" fill="url(#dg)"/>
<circle cx="1570.0" cy="400.0" r="4.6" fill="url(#dg)"/>
<circle cx="1580.0" cy="398.0" r="4.6" fill="url(#dg)"/>
<circle cx="1594.0" cy="395.0" r="4.6" fill="url(#dg)"/>
<circle cx="1607.0" cy="392.0" r="4.6" fill="url(#dg)"/>
<circle cx="1737.0" cy="353.0" r="4.6" fill="url(#dg)"/>
<circle cx="1750.0" cy="350.0" r="4.6" fill="url(#dg)"/>
<circle cx="1763.0" cy="348.0" r="4.6" fill="url(#dg)"/>
<circle cx="1775.0" cy="347.0" r="4.6" fill="url(#dg)"/>
<circle cx="1433.0" cy="475.0" r="4.6" fill="url(#dg)"/>
<circle cx="1440.0" cy="480.0" r="4.6" fill="url(#dg)"/>
<circle cx="1463.0" cy="469.0" r="4.6" fill="url(#dg)"/>
<circle cx="1600.0" cy="436.0" r="4.6" fill="url(#dg)"/>
<circle cx="1629.0" cy="428.0" r="4.6" fill="url(#dg)"/>
<circle cx="1636.0" cy="427.0" r="4.6" fill="url(#dg)"/>
<circle cx="1644.0" cy="425.5" r="4.6" fill="url(#dg)"/>
<circle cx="1652.0" cy="424.0" r="4.6" fill="url(#dg)"/>
<circle cx="1678.0" cy="418.0" r="4.6" fill="url(#dg)"/>
<circle cx="1808.0" cy="382.0" r="4.6" fill="url(#dg)"/>
<circle cx="1835.0" cy="375.0" r="4.6" fill="url(#dg)"/>
<circle cx="1845.0" cy="372.0" r="4.6" fill="url(#dg)"/>
<circle cx="460.0" cy="727.0" r="4.6" fill="url(#dg)"/>
<circle cx="466.0" cy="729.0" r="4.6" fill="url(#dg)"/>
<circle cx="484.0" cy="737.0" r="4.6" fill="url(#dg)"/>
<circle cx="490.0" cy="739.0" r="4.6" fill="url(#dg)"/>
<circle cx="657.5" cy="670.0" r="4.6" fill="url(#dg)"/>
<circle cx="703.0" cy="685.6" r="4.6" fill="url(#dg)"/>
<circle cx="727.4" cy="694.0" r="4.6" fill="url(#dg)"/>
<circle cx="879.4" cy="632.8" r="4.6" fill="url(#dg)"/>
<circle cx="908.6" cy="642.0" r="4.6" fill="url(#dg)"/>
<circle cx="1076.0" cy="594.0" r="4.6" fill="url(#dg)"/>
<circle cx="1090.0" cy="600.0" r="4.6" fill="url(#dg)"/>
<circle cx="1231.8" cy="544.3" r="4.6" fill="url(#dg)"/>
<circle cx="1240.0" cy="546.7" r="4.6" fill="url(#dg)"/>
<circle cx="1255.0" cy="551.8" r="4.6" fill="url(#dg)"/>
<circle cx="1272.6" cy="557.0" r="4.6" fill="url(#dg)"/>
<circle cx="1390.0" cy="496.6" r="4.6" fill="url(#dg)"/>
<circle cx="1402.0" cy="498.0" r="4.6" fill="url(#dg)"/>
<circle cx="1411.0" cy="500.4" r="4.6" fill="url(#dg)"/>
<circle cx="1426.5" cy="505.4" r="4.6" fill="url(#dg)"/>
<circle cx="1443.7" cy="511.5" r="4.6" fill="url(#dg)"/>
</g></svg></body></html>
